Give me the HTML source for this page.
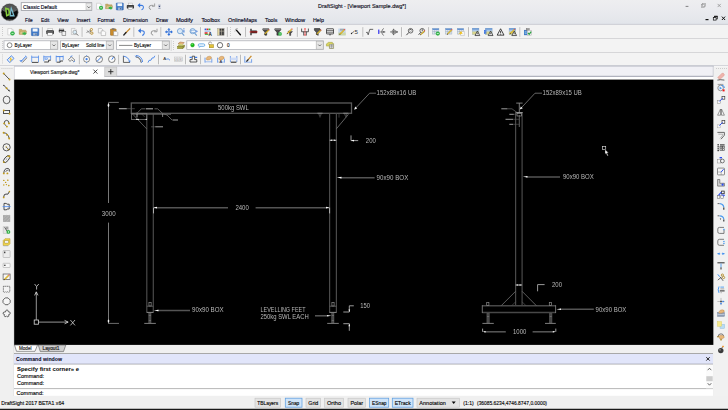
<!DOCTYPE html>
<html><head><meta charset="utf-8"><title>DraftSight - [Viewport Sample.dwg*]</title>
<style>
html,body{margin:0;padding:0;background:#f0f0f0;overflow:hidden;width:728px;height:410px}
svg{display:block;font-family:"Liberation Sans",sans-serif}
</style></head><body>
<svg width="728" height="410" viewBox="0 0 728 410">
<defs>
<linearGradient id="tg" x1="0" y1="0" x2="0" y2="1"><stop offset="0" stop-color="#eeeef0"/><stop offset="0.5" stop-color="#e9eaee"/><stop offset="1" stop-color="#e2e5ea"/></linearGradient>
<radialGradient id="lg" cx="0.5" cy="0.35" r="0.7"><stop offset="0" stop-color="#5a5a5a"/><stop offset="0.6" stop-color="#222"/><stop offset="1" stop-color="#000"/></radialGradient>
<linearGradient id="lg2" x1="0" y1="0" x2="0" y2="1"><stop offset="0" stop-color="#4a4a4a"/><stop offset="1" stop-color="#5e5e5e"/></linearGradient>
</defs>
<rect x="0" y="0" width="728" height="410" fill="#f0f0f0" />
<rect x="0" y="0" width="728" height="24" fill="url(#tg)" />
<line x1="0" y1="24.4" x2="728" y2="24.4" stroke="#c9cbd1" stroke-width="0.9" />
<rect x="0" y="25" width="728" height="41" fill="#f3f3f3" />
<line x1="0" y1="38.5" x2="728" y2="38.5" stroke="#d6d6d8" stroke-width="1" />
<line x1="0" y1="52.5" x2="728" y2="52.5" stroke="#d6d6d8" stroke-width="1" />
<line x1="0" y1="65.5" x2="728" y2="65.5" stroke="#d2d3d8" stroke-width="1.0" />
<line x1="0" y1="66.4" x2="728" y2="66.4" stroke="#fafafa" stroke-width="0.8" />
<rect x="14" y="66" width="699.6" height="10.4" fill="#f0f0f5" />
<line x1="14" y1="66.1" x2="713.6" y2="66.1" stroke="#bcbec8" stroke-width="1.0" />
<line x1="713.3" y1="66" x2="713.3" y2="77" stroke="#b4b6c2" stroke-width="0.8" />
<rect x="14.5" y="66.9" width="90" height="12.8" fill="#ffffff" />
<line x1="14.3" y1="66.5" x2="14.3" y2="79" stroke="#c4c5cc" stroke-width="0.6" />
<line x1="104.5" y1="76.4" x2="713" y2="76.4" stroke="#b0b2be" stroke-width="1.1" />
<rect x="104.5" y="77" width="609.1" height="2.7" fill="#ffffff" />
<rect x="104.8" y="67" width="12" height="9.3" fill="#dcdcdc" stroke="#bdbdbd" stroke-width="0.6" />
<line x1="108.2" y1="71.7" x2="113.4" y2="71.7" stroke="#222" stroke-width="0.9" />
<line x1="110.8" y1="69.1" x2="110.8" y2="74.3" stroke="#222" stroke-width="0.9" />
<line x1="93.4" y1="69.6" x2="97.4" y2="73.6" stroke="#222" stroke-width="0.8" />
<line x1="97.4" y1="69.6" x2="93.4" y2="73.6" stroke="#222" stroke-width="0.8" />
<text x="30.00" y="73.94" font-size="5.4" fill="#181818" textLength="49.50" lengthAdjust="spacingAndGlyphs" stroke="#181818" stroke-width="0.14" >Viewport Sample.dwg*</text>
<rect x="14" y="79.6" width="699.6" height="265.3" fill="#000" />
<rect x="0" y="66.6" width="13.6" height="330" fill="#f0f0f0" />
<line x1="13.8" y1="79" x2="13.8" y2="396" stroke="#d9d9d9" stroke-width="0.6" />
<rect x="713.6" y="66.6" width="14.4" height="330" fill="#f1f1f1" />
<rect x="14" y="345" width="699.3" height="8.5" fill="#f0f0f0" />
<path d="M14.5,345 L16.5,351.3 L35,351.3 L37.5,345 Z" stroke="#555" fill="#fff" stroke-width="0.6" />
<path d="M38.3,345 L40.3,351.6 L63.5,351.6 L65.8,345 Z" stroke="#555" fill="#cfcfcf" stroke-width="0.6" />
<text x="19.00" y="349.86" font-size="4.6" fill="#181818" textLength="12.50" lengthAdjust="spacingAndGlyphs" stroke="#181818" stroke-width="0.14" >Model</text>
<text x="42.50" y="349.86" font-size="4.6" fill="#181818" textLength="17.00" lengthAdjust="spacingAndGlyphs" stroke="#181818" stroke-width="0.14" >Layout1</text>
<line x1="14" y1="353.6" x2="713" y2="353.6" stroke="#8c8c8c" stroke-width="0.8" />
<rect x="14" y="354" width="699" height="10" fill="#e1e5fa" />
<line x1="14" y1="364.2" x2="713" y2="364.2" stroke="#8c8c90" stroke-width="0.8" />
<rect x="14" y="364.6" width="699" height="31.2" fill="#fff" />
<line x1="14" y1="388.6" x2="713" y2="388.6" stroke="#9a9a9a" stroke-width="0.7" />
<text x="16.00" y="361.34" font-size="5.4" fill="#05051a" textLength="46.00" lengthAdjust="spacingAndGlyphs" font-weight="bold" stroke="#05051a" stroke-width="0.04" >Command window</text>
<text x="17.00" y="370.72" font-size="5.9" fill="#080808" textLength="62.00" lengthAdjust="spacingAndGlyphs" font-weight="bold" stroke="#080808" stroke-width="0.04" >Specify first corner» e</text>
<text x="17.00" y="378.05" font-size="5.7" fill="#080808" textLength="27.00" lengthAdjust="spacingAndGlyphs" stroke="#080808" stroke-width="0.14" >Command:</text>
<text x="17.00" y="385.05" font-size="5.7" fill="#080808" textLength="27.00" lengthAdjust="spacingAndGlyphs" stroke="#080808" stroke-width="0.14" >Command:</text>
<text x="16.50" y="394.65" font-size="5.7" fill="#080808" textLength="27.00" lengthAdjust="spacingAndGlyphs" stroke="#080808" stroke-width="0.14" >Command:</text>
<line x1="706.3" y1="357.2" x2="709.7" y2="360.6" stroke="#222" stroke-width="1" />
<line x1="709.7" y1="357.2" x2="706.3" y2="360.6" stroke="#222" stroke-width="1" />
<rect x="706" y="365" width="7" height="23.3" fill="#fbfbfb" />
<path d="M707.7,370.2 L709.5,368.2 L711.3,370.2" stroke="#444" fill="none" stroke-width="0.8" />
<path d="M707.7,383.2 L709.5,385.2 L711.3,383.2" stroke="#444" fill="none" stroke-width="0.8" />
<rect x="706.3" y="376.2" width="6.4" height="5" fill="#cdcdcd" />
<rect x="0" y="396" width="728" height="13" fill="#f0f0f0" />
<line x1="0" y1="409.4" x2="728" y2="409.4" stroke="#1a1a1a" stroke-width="1.2" />
<text x="1.20" y="405.34" font-size="5.4" fill="#080808" textLength="63.00" lengthAdjust="spacingAndGlyphs" stroke="#080808" stroke-width="0.14" >DraftSight 2017 BETA1  x64</text>
<rect x="255" y="398.2" width="25.600000000000023" height="9" fill="#e3e3e3" stroke="#c4c4c4" stroke-width="0.6" />
<text x="257.20" y="405.24" font-size="5.4" fill="#080808" textLength="21.00" lengthAdjust="spacingAndGlyphs" stroke="#080808" stroke-width="0.14" >TBLayers</text>
<rect x="285.3" y="398.2" width="16.69999999999999" height="9" fill="#cfe4f9" stroke="#5e9fe0" stroke-width="0.75" />
<text x="288.00" y="405.24" font-size="5.4" fill="#080808" textLength="11.30" lengthAdjust="spacingAndGlyphs" stroke="#080808" stroke-width="0.14" >Snap</text>
<rect x="306" y="398.2" width="14.600000000000023" height="9" fill="#e3e3e3" stroke="#c4c4c4" stroke-width="0.6" />
<text x="308.30" y="405.24" font-size="5.4" fill="#080808" textLength="10.00" lengthAdjust="spacingAndGlyphs" stroke="#080808" stroke-width="0.14" >Grid</text>
<rect x="324.6" y="398.2" width="18.899999999999977" height="9" fill="#e3e3e3" stroke="#c4c4c4" stroke-width="0.6" />
<text x="327.00" y="405.24" font-size="5.4" fill="#080808" textLength="14.00" lengthAdjust="spacingAndGlyphs" stroke="#080808" stroke-width="0.14" >Ortho</text>
<rect x="348" y="398.2" width="17.399999999999977" height="9" fill="#e3e3e3" stroke="#c4c4c4" stroke-width="0.6" />
<text x="350.50" y="405.24" font-size="5.4" fill="#080808" textLength="12.50" lengthAdjust="spacingAndGlyphs" stroke="#080808" stroke-width="0.14" >Polar</text>
<rect x="369.6" y="398.2" width="19.099999999999966" height="9" fill="#cfe4f9" stroke="#5e9fe0" stroke-width="0.75" />
<text x="372.00" y="405.24" font-size="5.4" fill="#080808" textLength="14.50" lengthAdjust="spacingAndGlyphs" stroke="#080808" stroke-width="0.14" >ESnap</text>
<rect x="392.3" y="398.2" width="20.69999999999999" height="9" fill="#cfe4f9" stroke="#5e9fe0" stroke-width="0.75" />
<text x="394.70" y="405.24" font-size="5.4" fill="#080808" textLength="16.00" lengthAdjust="spacingAndGlyphs" stroke="#080808" stroke-width="0.14" >ETrack</text>
<rect x="417" y="398.2" width="42.39999999999998" height="9" fill="#e3e3e3" stroke="#c4c4c4" stroke-width="0.6" />
<text x="419.30" y="405.24" font-size="5.4" fill="#080808" textLength="26.50" lengthAdjust="spacingAndGlyphs" stroke="#080808" stroke-width="0.14" >Annotation</text>
<path d="M451.7,401.6 L455.7,401.6 L453.7,404 Z" stroke="none" fill="#080808" stroke-width="1" />
<text x="463.20" y="405.24" font-size="5.4" fill="#080808" textLength="10.50" lengthAdjust="spacingAndGlyphs" stroke="#080808" stroke-width="0.14" >(1:1)</text>
<text x="477.00" y="405.24" font-size="5.4" fill="#080808" textLength="70.00" lengthAdjust="spacingAndGlyphs" stroke="#080808" stroke-width="0.14" >(36085.6234,4746.8747,0.0000)</text>
<circle cx="9.65" cy="12.25" r="8.6" fill="#0c0c0c" stroke="#9a9a9a" stroke-width="0.6"/>
<clipPath id="lc"><circle cx="9.65" cy="12.25" r="8.3"/></clipPath>
<g clip-path="url(#lc)"><ellipse cx="9.65" cy="6" rx="9.5" ry="6.6" fill="url(#lg2)"/><ellipse cx="9.65" cy="22.5" rx="7" ry="3.6" fill="#6a6a6a" opacity="0.55"/></g>
<path d="M4.9,7.3 L9.1,8.5 Q10.6,11.8 9.75,15.2 L6.1,16.8 Z" stroke="none" fill="#86cc3c" stroke-width="1" />
<path d="M6.6,9.4 L8,9.9 Q8.9,12 8.3,14 L7.3,14.5 Z" stroke="none" fill="#1c1c1c" stroke-width="1" />
<path d="M11,6.1 L14.9,16.5 L9.5,16.6 Z" stroke="none" fill="#7cc0d2" stroke-width="1" />
<path d="M11.4,10.6 L13,14.9 L10.8,15 Z" stroke="none" fill="#1c2428" stroke-width="1" />
<rect x="21.2" y="2.7" width="70.6" height="7.8" fill="#fff" stroke="#8e9098" stroke-width="0.7" />
<rect x="86" y="3.2" width="5.4" height="6.8" fill="#e9e9e9" stroke="#b5b5b5" stroke-width="0.5" />
<path d="M87.4,6.4 L88.8,7.9 L90.2,6.4" stroke="#444" fill="none" stroke-width="0.7" />
<text x="23.00" y="9.14" font-size="5.4" fill="#05051a" textLength="34.00" lengthAdjust="spacingAndGlyphs" stroke="#05051a" stroke-width="0.14" >Classic Default</text>
<text x="318.00" y="8.32" font-size="5.6" fill="#10101c" textLength="88.00" lengthAdjust="spacingAndGlyphs" stroke="#10101c" stroke-width="0.14" >DraftSight - [Viewport Sample.dwg*]</text>
<line x1="685.6" y1="6.4" x2="688.4" y2="6.4" stroke="#666" stroke-width="0.8" />
<rect x="701.3" y="4.4" width="3" height="3" fill="none" stroke="#999" stroke-width="0.6" />
<rect x="702.3" y="3.4" width="3" height="3" fill="none" stroke="#999" stroke-width="0.6" />
<line x1="717.6" y1="3.9" x2="720.8" y2="7.1" stroke="#888" stroke-width="0.7" />
<line x1="720.8" y1="3.9" x2="717.6" y2="7.1" stroke="#888" stroke-width="0.7" />
<line x1="705.5" y1="19.6" x2="708.5" y2="19.6" stroke="#111" stroke-width="1.2" />
<rect x="714.5" y="16.3" width="2.8" height="2.6" fill="none" stroke="#111" stroke-width="0.7" />
<rect x="713.3" y="17.5" width="2.8" height="2.6" fill="#e6e8ec" stroke="#111" stroke-width="0.7" />
<line x1="714.3" y1="16.3" x2="717.5" y2="16.3" stroke="#111" stroke-width="1.0" />
<line x1="721.9" y1="16.6" x2="725.1" y2="20" stroke="#111" stroke-width="1.0" />
<line x1="725.1" y1="16.6" x2="721.9" y2="20" stroke="#111" stroke-width="1.0" />
<text x="25.00" y="22.05" font-size="5.7" fill="#05051a" textLength="7.70" lengthAdjust="spacingAndGlyphs" stroke="#05051a" stroke-width="0.14" >File</text>
<text x="41.00" y="22.05" font-size="5.7" fill="#05051a" textLength="8.40" lengthAdjust="spacingAndGlyphs" stroke="#05051a" stroke-width="0.14" >Edit</text>
<text x="57.20" y="22.05" font-size="5.7" fill="#05051a" textLength="11.30" lengthAdjust="spacingAndGlyphs" stroke="#05051a" stroke-width="0.14" >View</text>
<text x="76.50" y="22.05" font-size="5.7" fill="#05051a" textLength="13.70" lengthAdjust="spacingAndGlyphs" stroke="#05051a" stroke-width="0.14" >Insert</text>
<text x="97.50" y="22.05" font-size="5.7" fill="#05051a" textLength="17.00" lengthAdjust="spacingAndGlyphs" stroke="#05051a" stroke-width="0.14" >Format</text>
<text x="122.90" y="22.05" font-size="5.7" fill="#05051a" textLength="25.00" lengthAdjust="spacingAndGlyphs" stroke="#05051a" stroke-width="0.14" >Dimension</text>
<text x="156.00" y="22.05" font-size="5.7" fill="#05051a" textLength="12.00" lengthAdjust="spacingAndGlyphs" stroke="#05051a" stroke-width="0.14" >Draw</text>
<text x="176.00" y="22.05" font-size="5.7" fill="#05051a" textLength="17.00" lengthAdjust="spacingAndGlyphs" stroke="#05051a" stroke-width="0.14" >Modify</text>
<text x="201.40" y="22.05" font-size="5.7" fill="#05051a" textLength="18.70" lengthAdjust="spacingAndGlyphs" stroke="#05051a" stroke-width="0.14" >Toolbox</text>
<text x="228.00" y="22.05" font-size="5.7" fill="#05051a" textLength="29.00" lengthAdjust="spacingAndGlyphs" stroke="#05051a" stroke-width="0.14" >OnlineMaps</text>
<text x="265.00" y="22.05" font-size="5.7" fill="#05051a" textLength="12.40" lengthAdjust="spacingAndGlyphs" stroke="#05051a" stroke-width="0.14" >Tools</text>
<text x="285.00" y="22.05" font-size="5.7" fill="#05051a" textLength="20.00" lengthAdjust="spacingAndGlyphs" stroke="#05051a" stroke-width="0.14" >Window</text>
<text x="313.00" y="22.05" font-size="5.7" fill="#05051a" textLength="11.00" lengthAdjust="spacingAndGlyphs" stroke="#05051a" stroke-width="0.14" >Help</text>
<g transform="translate(96,2.7) scale(0.95)"><path d="M0.6,0.6 L4.6,0.6 L6.2,2.2 L6.2,7 L0.6,7 Z" stroke="#b9b9b9" fill="#fdfdfd" stroke-width="0.5" /><path d="M4.6,0.6 L4.6,2.2 L6.2,2.2" stroke="#bbb" fill="none" stroke-width="0.4" /><circle cx="5.3" cy="5.4" r="2.2" fill="#35b34a"/><rect x="4.3" y="5.0" width="2" height="0.8" fill="#d9f5dc"/></g>
<g transform="translate(105.3,2.7) scale(0.95)"><path d="M0.3,1.4 L2.8,1.4 L3.5,2.2 L7,2.2 L7,6.2 L0.3,6.2 Z" stroke="#a99252" fill="#c9ae6c" stroke-width="0.4" /><path d="M0.3,6.2 L1.6,3.4 L7.8,3.4 L7,6.2 Z" stroke="#a99252" fill="#dcc78c" stroke-width="0.4" /><path d="M3.6,4.6 L5.6,4.6 L5.6,3.6 L7.6,5.6 L5.6,7.6 L5.6,6.6 L3.6,6.6 Z" stroke="none" fill="#35b34a" stroke-width="0.8" /></g>
<g transform="translate(116,2.7) scale(0.95)"><rect x="0.3" y="0.3" width="7.4" height="7.4" fill="#3c78c8" stroke="#2a5ca8" stroke-width="0.5" rx="0.6"/><rect x="1.5" y="0.6" width="5" height="3" fill="#f4f7fb"/><rect x="2" y="5" width="4" height="2.6" fill="#9eb4cf"/><rect x="4.4" y="5.5" width="1" height="1.6" fill="#3c5f96"/></g>
<g transform="translate(126.6,2.7) scale(0.95)"><rect x="1.8" y="0.4" width="4.4" height="2.2" fill="#fafafa" stroke="#999" stroke-width="0.4"/><rect x="0.2" y="2.4" width="7.6" height="3.8" fill="#333" rx="0.9"/><rect x="1.6" y="4.8" width="4.8" height="2.6" fill="#fafafa" stroke="#777" stroke-width="0.4"/><rect x="1" y="3.3" width="6" height="0.7" fill="#777"/></g>
<g transform="translate(137.3,2.7) scale(0.95)"><path d="M1.4,2.8 L4.2,2.8 Q6.8,2.8 6.4,5.4 Q6,7.2 4.4,7.4" stroke="#3a7ae0" fill="none" stroke-width="1.1" /><path d="M0.2,2.8 L3,0.4 L3,5.2 Z" stroke="none" fill="#2f6fd8" stroke-width="0.8" /></g>
<g transform="translate(147.6,2.7) scale(0.95)"><path d="M6.2,2.8 L4,2.8 Q1.4,2.8 1.6,5.2 Q2,7 3.6,7.2" stroke="#8a8a8a" fill="none" stroke-width="0.9" /><path d="M7.4,0.8 L7.4,3.8 L4.6,3.8" stroke="#8a8a8a" fill="none" stroke-width="0.8" /></g>
<g transform="translate(158,4.2) scale(0.8)"><path d="M0.4,2.2 L3.2,2.2 L1.8,3.8 Z" stroke="none" fill="#2a3a6a" stroke-width="0.8" /><rect x="0.4" y="4.6" width="2.8" height="0.6" fill="#2a3a6a"/><rect x="0.4" y="0.8" width="2.8" height="0.6" fill="#2a3a6a"/></g>
<rect x="2" y="27" width="0.7" height="0.7" fill="#a4a4a4" />
<rect x="2" y="29.0" width="0.7" height="0.7" fill="#a4a4a4" />
<rect x="2" y="31.0" width="0.7" height="0.7" fill="#a4a4a4" />
<rect x="2" y="33.0" width="0.7" height="0.7" fill="#a4a4a4" />
<rect x="2" y="35.0" width="0.7" height="0.7" fill="#a4a4a4" />
<g transform="translate(7.2,27.95)"><path d="M0.6,0.6 L4.6,0.6 L6.2,2.2 L6.2,7 L0.6,7 Z" stroke="#b9b9b9" fill="#fdfdfd" stroke-width="0.5" /><path d="M4.6,0.6 L4.6,2.2 L6.2,2.2" stroke="#bbb" fill="none" stroke-width="0.4" /><circle cx="5.3" cy="5.4" r="2.2" fill="#35b34a"/><rect x="4.3" y="5.0" width="2" height="0.8" fill="#d9f5dc"/></g>
<g transform="translate(18.9,27.95)"><path d="M0.3,1.4 L2.8,1.4 L3.5,2.2 L7,2.2 L7,6.2 L0.3,6.2 Z" stroke="#a99252" fill="#c9ae6c" stroke-width="0.4" /><path d="M0.3,6.2 L1.6,3.4 L7.8,3.4 L7,6.2 Z" stroke="#a99252" fill="#dcc78c" stroke-width="0.4" /><path d="M3.6,4.6 L5.6,4.6 L5.6,3.6 L7.6,5.6 L5.6,7.6 L5.6,6.6 L3.6,6.6 Z" stroke="none" fill="#35b34a" stroke-width="0.8" /></g>
<g transform="translate(31.1,27.95)"><rect x="0.3" y="0.3" width="7.4" height="7.4" fill="#3c78c8" stroke="#2a5ca8" stroke-width="0.5" rx="0.6"/><rect x="1.5" y="0.6" width="5" height="3" fill="#f4f7fb"/><rect x="2" y="5" width="4" height="2.6" fill="#9eb4cf"/><rect x="4.4" y="5.5" width="1" height="1.6" fill="#3c5f96"/></g>
<line x1="42.4" y1="27.2" x2="42.4" y2="36.8" stroke="#9a9a9a" stroke-width="0.8" />
<line x1="43.1" y1="27.2" x2="43.1" y2="36.8" stroke="#fbfbfb" stroke-width="0.6" />
<g transform="translate(46.1,27.95)"><rect x="1.8" y="0.4" width="4.4" height="2.2" fill="#fafafa" stroke="#999" stroke-width="0.4"/><rect x="0.2" y="2.4" width="7.6" height="3.8" fill="#333" rx="0.9"/><rect x="1.6" y="4.8" width="4.8" height="2.6" fill="#fafafa" stroke="#777" stroke-width="0.4"/><rect x="1" y="3.3" width="6" height="0.7" fill="#777"/></g>
<g transform="translate(58.4,27.95)"><rect x="0.4" y="1.2" width="5.4" height="3.4" fill="#333" rx="0.8"/><rect x="1.4" y="0.2" width="3.4" height="1.4" fill="#f4f4f4" stroke="#888" stroke-width="0.3"/><rect x="3.6" y="3.4" width="3.8" height="4.2" fill="#f2f2f2" stroke="#555" stroke-width="0.5"/><rect x="1.2" y="3.3" width="2" height="1.2" fill="#eee"/></g>
<g transform="translate(70.6,27.95)"><path d="M0.8,0.5 L4.4,0.5 L5.6,1.7 L5.6,6.6 L0.8,6.6 Z" stroke="#aaa" fill="#f4f4f4" stroke-width="0.5" /><circle cx="4.2" cy="4.2" r="1.9" fill="#d9ecf7" stroke="#888" stroke-width="0.6"/><path d="M5.6,5.6 L7.6,7.6" stroke="#666" fill="none" stroke-width="1.0" /></g>
<line x1="82.2" y1="27.2" x2="82.2" y2="36.8" stroke="#9a9a9a" stroke-width="0.8" />
<line x1="82.9" y1="27.2" x2="82.9" y2="36.8" stroke="#fbfbfb" stroke-width="0.6" />
<g transform="translate(86,27.95)"><path d="M0.4,4.6 L5,2.2 M0.8,2.4 L4.2,5.6" stroke="#777" fill="none" stroke-width="0.7" /><circle cx="5.4" cy="1.6" r="1.1" fill="none" stroke="#b58a2a" stroke-width="0.9"/><circle cx="5.8" cy="5.2" r="1.2" fill="none" stroke="#b58a2a" stroke-width="0.9"/><circle cx="4.4" cy="3.6" r="0.5" fill="#555"/></g>
<g transform="translate(98,27.95)"><path d="M0.4,0.5 L3.4,0.5 L4.6,1.7 L4.6,5 L0.4,5 Z" stroke="#999" fill="#f7f7f7" stroke-width="0.5" /><path d="M3.2,2.9 L6.2,2.9 L7.6,4.3 L7.6,7.6 L3.2,7.6 Z" stroke="#999" fill="#fbfbfb" stroke-width="0.5" /></g>
<g transform="translate(110.2,27.95)"><rect x="0.3" y="1" width="5.6" height="6.4" fill="#c98a2a" stroke="#8c5e14" stroke-width="0.5" rx="0.5"/><rect x="1.8" y="0.2" width="2.6" height="1.6" fill="#777" rx="0.4"/><path d="M3.4,3.4 L6.4,3.4 L7.6,4.6 L7.6,7.7 L3.4,7.7 Z" stroke="#888" fill="#fafafa" stroke-width="0.5" /></g>
<g transform="translate(122.6,27.95)"><path d="M7.2,0.8 L3.2,5" stroke="#c88a2a" fill="none" stroke-width="1.2" stroke-linecap="round"/><path d="M3.4,4.6 L1.2,7" stroke="#222" fill="none" stroke-width="1.3" stroke-linecap="round"/></g>
<line x1="134.0" y1="27.2" x2="134.0" y2="36.8" stroke="#9a9a9a" stroke-width="0.8" />
<line x1="134.7" y1="27.2" x2="134.7" y2="36.8" stroke="#fbfbfb" stroke-width="0.6" />
<g transform="translate(137.8,27.95)"><path d="M1.4,2.8 L4.2,2.8 Q6.8,2.8 6.4,5.4 Q6,7.2 4.4,7.4" stroke="#3a7ae0" fill="none" stroke-width="1.1" /><path d="M0.2,2.8 L3,0.4 L3,5.2 Z" stroke="none" fill="#2f6fd8" stroke-width="0.8" /></g>
<g transform="translate(149.6,27.95)"><path d="M6.2,2.8 L4,2.8 Q1.4,2.8 1.6,5.2 Q2,7 3.6,7.2" stroke="#8a8a8a" fill="none" stroke-width="0.9" /><path d="M7.4,0.8 L7.4,3.8 L4.6,3.8" stroke="#8a8a8a" fill="none" stroke-width="0.8" /></g>
<line x1="161.0" y1="27.2" x2="161.0" y2="36.8" stroke="#9a9a9a" stroke-width="0.8" />
<line x1="161.7" y1="27.2" x2="161.7" y2="36.8" stroke="#fbfbfb" stroke-width="0.6" />
<g transform="translate(164.9,27.95)"><path d="M4,0 L5.6,1.9 L2.4,1.9 Z M4,8 L5.6,6.1 L2.4,6.1 Z M0,4 L1.9,2.4 L1.9,5.6 Z M8,4 L6.1,2.4 L6.1,5.6 Z" stroke="none" fill="#2f6fd8" stroke-width="0.8" /><path d="M4,1.5 L4,6.5 M1.5,4 L6.5,4" stroke="#2f6fd8" fill="none" stroke-width="1.2" /><circle cx="4" cy="4" r="0.7" fill="#dfe9fb"/></g>
<g transform="translate(177,27.95)"><circle cx="3" cy="3.2" r="2.6" fill="#dbe9f7" stroke="#6a9bd0" stroke-width="0.8"/><path d="M5,5.2 L7.2,7.6" stroke="#6a9bd0" fill="none" stroke-width="1.1" /><rect x="6.4" y="0.4" width="1" height="1" fill="#2f6fd8"/><rect x="6.4" y="2.2" width="1" height="2.4" fill="#2f6fd8"/></g>
<g transform="translate(189.6,27.95)"><circle cx="3" cy="3.2" r="2.6" fill="#dbe9f7" stroke="#6a9bd0" stroke-width="0.8"/><path d="M5,5.2 L7.2,7.6" stroke="#6a9bd0" fill="none" stroke-width="1.1" /><rect x="1.4" y="2.2" width="4.6" height="2.2" fill="#eef4fb" stroke="#5a8fd0" stroke-width="0.5"/><path d="M6,2.6 L7.8,3.4 L6,4.4" stroke="#2f6fd8" fill="none" stroke-width="0.7" /></g>
<line x1="200.5" y1="27.2" x2="200.5" y2="36.8" stroke="#9a9a9a" stroke-width="0.8" />
<line x1="201.2" y1="27.2" x2="201.2" y2="36.8" stroke="#fbfbfb" stroke-width="0.6" />
<g transform="translate(204.4,27.95)"><rect x="0.2" y="0.6" width="1.8" height="1.6" fill="#2f5fe0"/><rect x="2.2" y="0.6" width="1.8" height="1.6" fill="#e02828"/><rect x="4.2" y="0.6" width="1.8" height="1.6" fill="#2fb040"/><rect x="0.2" y="2.6" width="5.8" height="1.3" fill="#a9c2ef"/><rect x="0.2" y="4.3" width="3" height="1.6" fill="#e02828"/><rect x="0.4" y="5.9" width="3.6" height="1" fill="#2fb040"/><text x="4.2" y="8" font-size="4.6" fill="#111" font-weight="bold">A</text></g>
<g transform="translate(216.8,27.95)"><rect x="0.4" y="0.4" width="7" height="7.2" fill="#c9c2b0" stroke="#999" stroke-width="0.4"/><rect x="0.8" y="0.8" width="1.4" height="6.4" fill="#e4d6a0"/><rect x="2.8" y="0.8" width="1.9" height="2" fill="#333"/><rect x="5.2" y="0.8" width="1.9" height="2" fill="#333"/><rect x="2.8" y="3.4" width="1.9" height="3.8" fill="#444"/><rect x="5.2" y="3.4" width="1.9" height="3.8" fill="#444"/></g>
<line x1="227.4" y1="27.2" x2="227.4" y2="36.8" stroke="#9a9a9a" stroke-width="0.8" />
<line x1="228.1" y1="27.2" x2="228.1" y2="36.8" stroke="#fbfbfb" stroke-width="0.6" />
<g transform="translate(234,27.95)"><path d="M2.6,2.4 L6.4,6.8" stroke="#111" fill="none" stroke-width="1.4" stroke-linecap="round"/><path d="M1,1.8 L2.6,0.6 M3.4,0.4 L3.2,1.4 M0.6,3.2 L1.6,2.8" stroke="#555" fill="none" stroke-width="0.5" /></g>
<line x1="245.7" y1="27.2" x2="245.7" y2="36.8" stroke="#9a9a9a" stroke-width="0.8" />
<line x1="246.39999999999998" y1="27.2" x2="246.39999999999998" y2="36.8" stroke="#fbfbfb" stroke-width="0.6" />
<g transform="translate(249.6,27.95)"><path d="M1.4,0.8 L1.4,7.2" stroke="#222" fill="none" stroke-width="1.3" /><rect x="1.6" y="2.6" width="5.8" height="2.8" fill="#222" rx="0.6"/><path d="M0,4 L8,4" stroke="#e02020" fill="none" stroke-width="0.9" /></g>
<g transform="translate(262,27.95)"><path d="M0.8,0.8 L6.8,0.8 L6.8,2 L4.7,4.2 L4.7,7.2 L2.9,7.2 L2.9,4.2 L0.8,2 Z" stroke="#1a1a1a" fill="#4a4a4a" stroke-width="0.5" /><rect x="1" y="0.9" width="5.6" height="0.8" fill="#9a9a9a"/><g transform="translate(1.4,0.6) scale(0.86)"><path d="M1.2,6.8 L1.9,5.2 L5.7,1.4 L6.6,2.3 L2.8,6.1 Z" stroke="#a8861c" fill="#e8c22e" stroke-width="0.3" /><path d="M0.9,7.1 L1.5,5.7 L2.3,6.5 Z" stroke="none" fill="#2a2a2a" stroke-width="0.8" /><path d="M5.7,1.4 L6.4,0.7 L7.3,1.6 L6.6,2.3 Z" stroke="none" fill="#e8484a" stroke-width="0.8" /></g></g>
<g transform="translate(274,27.95)"><path d="M0.8,0.8 L6.8,0.8 L6.8,2 L4.7,4.2 L4.7,7.2 L2.9,7.2 L2.9,4.2 L0.8,2 Z" stroke="#1a1a1a" fill="#4a4a4a" stroke-width="0.5" /><rect x="1" y="0.9" width="5.6" height="0.8" fill="#9a9a9a"/><circle cx="6" cy="6" r="1.9" fill="#35b34a"/><rect x="5.2" y="5.7" width="1.6" height="0.6" fill="#d9f5dc"/></g>
<g transform="translate(286.2,27.95)"><g transform="translate(1.4,2.6) scale(0.68)"><path d="M0.8,0.8 L6.8,0.8 L6.8,2 L4.7,4.2 L4.7,7.2 L2.9,7.2 L2.9,4.2 L0.8,2 Z" stroke="#1a1a1a" fill="#4a4a4a" stroke-width="0.5" /><rect x="1" y="0.9" width="5.6" height="0.8" fill="#9a9a9a"/></g><g transform="translate(-0.4,-0.4) scale(0.95)"><path d="M1.2,6.8 L1.9,5.2 L5.7,1.4 L6.6,2.3 L2.8,6.1 Z" stroke="#a8861c" fill="#e8c22e" stroke-width="0.3" /><path d="M0.9,7.1 L1.5,5.7 L2.3,6.5 Z" stroke="none" fill="#2a2a2a" stroke-width="0.8" /><path d="M5.7,1.4 L6.4,0.7 L7.3,1.6 L6.6,2.3 Z" stroke="none" fill="#e8484a" stroke-width="0.8" /></g></g>
<line x1="297.4" y1="27.2" x2="297.4" y2="36.8" stroke="#9a9a9a" stroke-width="0.8" />
<line x1="298.09999999999997" y1="27.2" x2="298.09999999999997" y2="36.8" stroke="#fbfbfb" stroke-width="0.6" />
<g transform="translate(301,27.95)"><path d="M0.6,0.6 L0.6,3.8 L7.4,3.8 L7.4,0.6 M2.7,3.8 L2.7,7.6 M5.3,3.8 L5.3,7.6" stroke="#1a1a1a" fill="none" stroke-width="0.7" /><path d="M4,0.2 L4,7.8" stroke="#f03030" fill="none" stroke-width="0.6" /><path d="M3.4,1.6 L4,0.4 L4.6,1.6 M3.4,6.4 L4,7.6 L4.6,6.4" stroke="#f03030" fill="none" stroke-width="0.5" /></g>
<g transform="translate(313.8,27.95)"><path d="M0.6,0.6 L6,0.6 L7,2.4 L4.4,5.4 L4.4,7.4 L2.6,6.4 L2.6,4.4 L0.6,2.2 Z" stroke="#111" fill="#555" stroke-width="0.5" /><g transform="translate(1.6,0.8) scale(0.84)"><path d="M1.2,6.8 L1.9,5.2 L5.7,1.4 L6.6,2.3 L2.8,6.1 Z" stroke="#a8861c" fill="#e8c22e" stroke-width="0.3" /><path d="M0.9,7.1 L1.5,5.7 L2.3,6.5 Z" stroke="none" fill="#2a2a2a" stroke-width="0.8" /><path d="M5.7,1.4 L6.4,0.7 L7.3,1.6 L6.6,2.3 Z" stroke="none" fill="#e8484a" stroke-width="0.8" /></g></g>
<g transform="translate(326,27.95)"><rect x="0.5" y="0.8" width="7" height="5.2" fill="#ededed" stroke="#2a2a2a" stroke-width="0.75" rx="0.4"/><path d="M0.5,2.6 L7.5,2.6 M0.5,4.3 L7.5,4.3" stroke="#2a2a2a" fill="none" stroke-width="0.6" /><path d="M3,6 L4,7.4 L5,6" stroke="#2a2a2a" fill="none" stroke-width="0.6" /></g>
<g transform="translate(338,27.95)"><rect x="0.3" y="0.6" width="7.4" height="6.8" fill="#c4d6ea"/><rect x="0.3" y="4.6" width="7.4" height="2.8" fill="#ccd8a6"/><path d="M3,0.6 L3,2.4 M5,0.6 L5,2.4 M2,2 L6,2" stroke="#777" fill="none" stroke-width="0.5" /><g transform="translate(0.4,0.2) scale(0.95)"><path d="M1.2,6.8 L1.9,5.2 L5.7,1.4 L6.6,2.3 L2.8,6.1 Z" stroke="#a8861c" fill="#e8c22e" stroke-width="0.3" /><path d="M0.9,7.1 L1.5,5.7 L2.3,6.5 Z" stroke="none" fill="#2a2a2a" stroke-width="0.8" /><path d="M5.7,1.4 L6.4,0.7 L7.3,1.6 L6.6,2.3 Z" stroke="none" fill="#e8484a" stroke-width="0.8" /></g></g>
<g transform="translate(350.6,27.95)"><path d="M0.6,5.6 L2,4.6 L3.6,3.4" stroke="#222" fill="none" stroke-width="0.6" /><circle cx="0.9" cy="5.5" r="0.7" fill="#222"/><text x="3.8" y="6.4" font-size="6.2" fill="#333">5</text></g>
<line x1="363.0" y1="27.2" x2="363.0" y2="36.8" stroke="#9a9a9a" stroke-width="0.8" />
<line x1="363.7" y1="27.2" x2="363.7" y2="36.8" stroke="#fbfbfb" stroke-width="0.6" />
<g transform="translate(365.8,27.95)"><path d="M0.4,4.6 L1.4,4.2 L2.4,6.8 L4,1.4 L7.4,1.4" stroke="#1a1a1a" fill="none" stroke-width="0.65" /></g>
<g transform="translate(378,27.95)"><rect x="0.3" y="1.6" width="1.0" height="4.4" fill="#1010f0"/><path d="M1.6,4 L7.4,4" stroke="#333" fill="none" stroke-width="0.5" /><path d="M5.6,0.4 Q2,4 5.6,7.6" stroke="#222" fill="none" stroke-width="0.6" /><path d="M5,3.4 L6.6,4 L5,4.6" stroke="#222" fill="none" stroke-width="0.5" /></g>
<g transform="translate(390,27.95)"><path d="M0,4 L8,4 M3.6,0.8 L3.6,7.2" stroke="#222" fill="none" stroke-width="0.55" /><ellipse cx="3.6" cy="4" rx="1.5" ry="2.4" fill="none" stroke="#333" stroke-width="0.5" /><path d="M5,2.6 L7.6,4 L5,5.4" stroke="#333" fill="none" stroke-width="0.5" /></g>
<line x1="401.5" y1="27.2" x2="401.5" y2="36.8" stroke="#9a9a9a" stroke-width="0.8" />
<line x1="402.2" y1="27.2" x2="402.2" y2="36.8" stroke="#fbfbfb" stroke-width="0.6" />
<g transform="translate(405.6,27.95)"><circle cx="5" cy="2.8" r="2.3" fill="#f4f4f4" stroke="#333" stroke-width="0.7"/><path d="M3.3,4.5 L0.8,7.2" stroke="#333" fill="none" stroke-width="0.9" /><rect x="4.2" y="1.8" width="1.6" height="2" fill="none" stroke="#666" stroke-width="0.4"/></g>
<g transform="translate(417.8,27.95)"><circle cx="4.4" cy="2.8" r="2.3" fill="#f4f4f4" stroke="#333" stroke-width="0.7"/><path d="M2.8,4.6 L0.8,6.8" stroke="#333" fill="none" stroke-width="0.9" /><rect x="4" y="1.2" width="0.8" height="2.2" fill="#333"/><g transform="translate(1.6,1.6) scale(0.8)"><path d="M1.2,6.8 L1.9,5.2 L5.7,1.4 L6.6,2.3 L2.8,6.1 Z" stroke="#a8861c" fill="#e8c22e" stroke-width="0.3" /><path d="M0.9,7.1 L1.5,5.7 L2.3,6.5 Z" stroke="none" fill="#2a2a2a" stroke-width="0.8" /><path d="M5.7,1.4 L6.4,0.7 L7.3,1.6 L6.6,2.3 Z" stroke="none" fill="#e8484a" stroke-width="0.8" /></g></g>
<line x1="428.7" y1="27.2" x2="428.7" y2="36.8" stroke="#9a9a9a" stroke-width="0.8" />
<line x1="429.4" y1="27.2" x2="429.4" y2="36.8" stroke="#fbfbfb" stroke-width="0.6" />
<g transform="translate(432.2,27.95)"><rect x="0.3" y="0.5" width="6.4" height="5.6" fill="#dfe6ee" stroke="#8aa0b8" stroke-width="0.4"/><rect x="0.3" y="0.5" width="6.4" height="1.5" fill="#5f8fd0"/><path d="M0.3,3.6 L6.7,3.6 M2.5,2 L2.5,6.1 M4.6,2 L4.6,6.1" stroke="#8aa0b8" fill="none" stroke-width="0.4" /><circle cx="5.6" cy="5.6" r="2.1" fill="#35b34a"/><rect x="4.6" y="5.2" width="2" height="0.8" fill="#d9f5dc"/></g>
<g transform="translate(445.2,27.95)"><rect x="0.3" y="0.5" width="6.4" height="5.6" fill="#dfe6ee" stroke="#8aa0b8" stroke-width="0.4"/><rect x="0.3" y="0.5" width="6.4" height="1.5" fill="#5f8fd0"/><path d="M0.3,3.6 L6.7,3.6 M2.5,2 L2.5,6.1 M4.6,2 L4.6,6.1" stroke="#8aa0b8" fill="none" stroke-width="0.4" /><g transform="translate(0.8,0.4) scale(0.9)"><path d="M1.2,6.8 L1.9,5.2 L5.7,1.4 L6.6,2.3 L2.8,6.1 Z" stroke="#a8861c" fill="#e8c22e" stroke-width="0.3" /><path d="M0.9,7.1 L1.5,5.7 L2.3,6.5 Z" stroke="none" fill="#2a2a2a" stroke-width="0.8" /><path d="M5.7,1.4 L6.4,0.7 L7.3,1.6 L6.6,2.3 Z" stroke="none" fill="#e8484a" stroke-width="0.8" /></g></g>
<g transform="translate(457,27.95)"><rect x="0.3" y="0.5" width="6.4" height="5.6" fill="#dfe6ee" stroke="#8aa0b8" stroke-width="0.4"/><rect x="0.3" y="0.5" width="6.4" height="1.5" fill="#5f8fd0"/><path d="M0.3,3.6 L6.7,3.6 M2.5,2 L2.5,6.1 M4.6,2 L4.6,6.1" stroke="#8aa0b8" fill="none" stroke-width="0.4" /><path d="M3.6,3.4 L7.4,3.4 L7.4,7.6 L3.6,7.6 Z" stroke="#aaa" fill="#f7f7f7" stroke-width="0.4" /><path d="M1,6.6 L3,4.6 L2.6,3.2 L4,4 L5.4,3.4 L4.8,4.8 L5.8,6 L4.2,5.8 L3.4,7 L3.2,5.6 Z" stroke="none" fill="#f0c020" stroke-width="0.8" /></g>
<line x1="468.5" y1="27.2" x2="468.5" y2="36.8" stroke="#9a9a9a" stroke-width="0.8" />
<line x1="469.2" y1="27.2" x2="469.2" y2="36.8" stroke="#fbfbfb" stroke-width="0.6" />
<g transform="translate(472,27.95)"><rect x="0.3" y="0.4" width="6.6" height="6.2" fill="#a9c8ea" stroke="#7d9cc0" stroke-width="0.4"/><rect x="0.3" y="3.6" width="6.6" height="3" fill="#d9d48c"/><rect x="0.3" y="0.4" width="6.6" height="1.2" fill="#5f8fd0"/><path d="M3,7.6 L5.4,3 L7.8,7.6 Z" stroke="#222" fill="#e6e6e6" stroke-width="0.7" /><path d="M5.4,4.6 L5.4,6.2" stroke="#222" fill="none" stroke-width="0.6" /></g>
<g transform="translate(484,27.95)"><g transform="translate(1.2,0)"><rect x="0.3" y="0.4" width="6.6" height="6.2" fill="#a9c8ea" stroke="#7d9cc0" stroke-width="0.4"/><rect x="0.3" y="3.6" width="6.6" height="3" fill="#d9d48c"/><rect x="0.3" y="0.4" width="6.6" height="1.2" fill="#5f8fd0"/><path d="M3,7.6 L5.4,3 L7.8,7.6 Z" stroke="#222" fill="#e6e6e6" stroke-width="0.7" /><path d="M5.4,4.6 L5.4,6.2" stroke="#222" fill="none" stroke-width="0.6" /></g><path d="M0,3 L2.6,3 M0,5 L2.6,5" stroke="#1f5fe0" fill="none" stroke-width="1.0" /><path d="M1.4,2 L0,3 L1.4,4 M1.4,4 L0,5 L1.4,6" stroke="#1f5fe0" fill="none" stroke-width="0.6" /></g>
<g transform="translate(496.6,27.95)"><path d="M0.6,7.2 L4,0.8 L7.4,7.2 Z" stroke="#1a1a1a" fill="#f4f4f4" stroke-width="0.8" /><path d="M4,3 L4,5.4 M4,6 L4,6.6" stroke="#1a1a1a" fill="none" stroke-width="0.8" /></g>
<g transform="translate(508.8,27.95)"><rect x="0.3" y="0.4" width="6.6" height="6.2" fill="#a9c8ea" stroke="#7d9cc0" stroke-width="0.4"/><rect x="0.3" y="3.6" width="6.6" height="3" fill="#d9d48c"/><rect x="0.3" y="0.4" width="6.6" height="1.2" fill="#5f8fd0"/><path d="M3,7.6 L5.4,3 L7.8,7.6 Z" stroke="#222" fill="#e6e6e6" stroke-width="0.7" /><path d="M5.4,4.6 L5.4,6.2" stroke="#222" fill="none" stroke-width="0.6" /><g transform="translate(0,0) scale(0.9)"><path d="M1.2,6.8 L1.9,5.2 L5.7,1.4 L6.6,2.3 L2.8,6.1 Z" stroke="#a8861c" fill="#e8c22e" stroke-width="0.3" /><path d="M0.9,7.1 L1.5,5.7 L2.3,6.5 Z" stroke="none" fill="#2a2a2a" stroke-width="0.8" /><path d="M5.7,1.4 L6.4,0.7 L7.3,1.6 L6.6,2.3 Z" stroke="none" fill="#e8484a" stroke-width="0.8" /></g></g>
<line x1="520.0" y1="27.2" x2="520.0" y2="36.8" stroke="#9a9a9a" stroke-width="0.8" />
<line x1="520.7" y1="27.2" x2="520.7" y2="36.8" stroke="#fbfbfb" stroke-width="0.6" />
<g transform="translate(523.8,27.95)"><rect x="0.4" y="2.2" width="3.4" height="4.8" fill="#3f7fd0" stroke="#2a5ca8" stroke-width="0.4"/><rect x="2.4" y="0.6" width="3" height="2" fill="#9a9a9a" stroke="#666" stroke-width="0.4"/><rect x="3.4" y="2.4" width="4.2" height="4.8" fill="#f1f1f1" stroke="#999" stroke-width="0.4"/><path d="M4.2,5 L5.4,6.4 L7.4,3.6" stroke="#2aa040" fill="none" stroke-width="1.2" /><text x="1" y="6" font-size="3.4" fill="#dce8f8">D</text></g>
<rect x="230" y="27" width="0.7" height="0.7" fill="#a4a4a4" />
<rect x="230" y="29.0" width="0.7" height="0.7" fill="#a4a4a4" />
<rect x="230" y="31.0" width="0.7" height="0.7" fill="#a4a4a4" />
<rect x="230" y="33.0" width="0.7" height="0.7" fill="#a4a4a4" />
<rect x="230" y="35.0" width="0.7" height="0.7" fill="#a4a4a4" />
<rect x="2" y="41" width="0.7" height="0.7" fill="#a4a4a4" />
<rect x="2" y="43.0" width="0.7" height="0.7" fill="#a4a4a4" />
<rect x="2" y="45.0" width="0.7" height="0.7" fill="#a4a4a4" />
<rect x="2" y="47.0" width="0.7" height="0.7" fill="#a4a4a4" />
<rect x="2" y="49.0" width="0.7" height="0.7" fill="#a4a4a4" />
<rect x="4" y="40.8" width="53.8" height="8.800000000000004" fill="#ffffff" stroke="#a6a8b0" stroke-width="0.7" />
<rect x="50.4" y="41.199999999999996" width="7.0" height="8.000000000000004" fill="#e6e6e6" stroke="#adadad" stroke-width="0.6" />
<path d="M52.39999999999999,44.5 L53.89999999999999,46.0 L55.39999999999999,44.5" stroke="#444" fill="none" stroke-width="0.7" />
<circle cx="9.6" cy="45.2" r="2.4" fill="#fff" stroke="#555" stroke-width="0.7"/>
<text x="14.60" y="47.28" font-size="5.5" fill="#080808" textLength="17.20" lengthAdjust="spacingAndGlyphs" stroke="#080808" stroke-width="0.14" >ByLayer</text>
<rect x="60.4" y="40.8" width="53.199999999999996" height="8.800000000000004" fill="#ffffff" stroke="#a6a8b0" stroke-width="0.7" />
<rect x="106.19999999999999" y="41.199999999999996" width="7.0" height="8.000000000000004" fill="#e6e6e6" stroke="#adadad" stroke-width="0.6" />
<path d="M108.19999999999999,44.5 L109.69999999999999,46.0 L111.19999999999999,44.5" stroke="#444" fill="none" stroke-width="0.7" />
<text x="62.00" y="47.28" font-size="5.5" fill="#080808" textLength="17.00" lengthAdjust="spacingAndGlyphs" stroke="#080808" stroke-width="0.14" >ByLayer</text>
<text x="86.00" y="47.28" font-size="5.5" fill="#080808" textLength="18.40" lengthAdjust="spacingAndGlyphs" stroke="#080808" stroke-width="0.14" >Solid line</text>
<rect x="116.6" y="40.8" width="53.0" height="8.800000000000004" fill="#ffffff" stroke="#a6a8b0" stroke-width="0.7" />
<rect x="162.2" y="41.199999999999996" width="7.0" height="8.000000000000004" fill="#e6e6e6" stroke="#adadad" stroke-width="0.6" />
<path d="M164.20000000000002,44.5 L165.70000000000002,46.0 L167.20000000000002,44.5" stroke="#444" fill="none" stroke-width="0.7" />
<line x1="119" y1="45.4" x2="132.4" y2="45.4" stroke="#333" stroke-width="0.6" />
<text x="134.00" y="47.28" font-size="5.5" fill="#080808" textLength="17.00" lengthAdjust="spacingAndGlyphs" stroke="#080808" stroke-width="0.14" >ByLayer</text>
<line x1="171.2" y1="40" x2="171.2" y2="51" stroke="#c9c9c9" stroke-width="0.6" />
<rect x="173.2" y="41" width="0.7" height="0.7" fill="#a4a4a4" />
<rect x="173.2" y="43.0" width="0.7" height="0.7" fill="#a4a4a4" />
<rect x="173.2" y="45.0" width="0.7" height="0.7" fill="#a4a4a4" />
<rect x="173.2" y="47.0" width="0.7" height="0.7" fill="#a4a4a4" />
<rect x="173.2" y="49.0" width="0.7" height="0.7" fill="#a4a4a4" />
<g transform="translate(176.8,41.2)"><path d="M0.4,5.6 L2,4 L7.6,4 L6,5.6 Z" stroke="#6a6a1a" fill="#c8c860" stroke-width="0.4" /><rect x="0.4" y="5.6" width="5.6" height="1.8" fill="#a8a83a" stroke="#6a6a1a" stroke-width="0.4"/><path d="M6,5.6 L7.6,4 L7.6,5.8 L6,7.4 Z" stroke="#6a6a1a" fill="#8c8c2a" stroke-width="0.4" /><path d="M1.2,2.6 L3.2,0.8 L7.4,1.4 L5.4,3.4 Z" stroke="#a0683a" fill="#e8b880" stroke-width="0.5" /><path d="M1.4,3.6 L3,2.6 L6.6,3 L5.2,4 Z" stroke="none" fill="#d4d47a" stroke-width="0.8" /></g>
<rect x="186.8" y="40.8" width="136.8" height="8.800000000000004" fill="#ffffff" stroke="#a6a8b0" stroke-width="0.7" />
<rect x="316.20000000000005" y="41.199999999999996" width="7.0" height="8.000000000000004" fill="#e6e6e6" stroke="#adadad" stroke-width="0.6" />
<path d="M318.20000000000005,44.5 L319.70000000000005,46.0 L321.20000000000005,44.5" stroke="#444" fill="none" stroke-width="0.7" />
<circle cx="192.5" cy="45.1" r="1.9" fill="#18c018" stroke="#0a8a0a" stroke-width="0.4"/>
<circle cx="192.1" cy="44.5" r="0.6" fill="#8af08a"/>
<rect x="198.2" y="43.8" width="6.6" height="2.6" rx="1.3" fill="#eaf4fd" stroke="#4a9ae0" stroke-width="0.7"/>
<path d="M199.4,46.2 L199,47.4 L200.8,46.4" stroke="#4a9ae0" fill="#eaf4fd" stroke-width="0.5" />
<rect x="209.2" y="44.6" width="4.4" height="3.2" fill="#e2c23a" stroke="#8c7414" stroke-width="0.4" />
<path d="M208.6,44.6 L208.6,43.2 Q208.8,41.8 210.4,42 Q211.6,42.2 211.6,43.4" stroke="#777" fill="none" stroke-width="0.7" />
<circle cx="220" cy="45.2" r="2.7" fill="#fff" stroke="#333" stroke-width="0.7"/>
<text x="227.00" y="47.14" font-size="5.4" fill="#222" textLength="2.60" lengthAdjust="spacingAndGlyphs" stroke="#222" stroke-width="0.14" >0</text>
<g transform="translate(326,41.3)"><path d="M0.4,2.6 L2.6,1 L6.4,1 L6.4,2.2 L7.6,2.2 L7.6,7.2 L3.4,7.2 L3.4,4.8 L0.4,4.8 Z" stroke="#8c8c2a" fill="#d8d460" stroke-width="0.4" /><rect x="3.8" y="3" width="3.6" height="4" fill="#d9d9d9" stroke="#777" stroke-width="0.4"/><path d="M4.4,4.2 L6.8,4.2 M4.4,5.4 L6.8,5.4 M5.6,3 L5.6,7" stroke="#777" fill="none" stroke-width="0.4" /></g>
<rect x="2" y="54.6" width="0.7" height="0.7" fill="#a4a4a4" />
<rect x="2" y="56.6" width="0.7" height="0.7" fill="#a4a4a4" />
<rect x="2" y="58.6" width="0.7" height="0.7" fill="#a4a4a4" />
<rect x="2" y="60.6" width="0.7" height="0.7" fill="#a4a4a4" />
<rect x="2" y="62.6" width="0.7" height="0.7" fill="#a4a4a4" />
<g transform="translate(6.6,55.2)"><path d="M0.6,4.6 L4.8,0.6 L7.4,3.2 L3.2,7.4 Z" stroke="#3f7fe8" fill="#e4ecfa" stroke-width="0.9" /><path d="M4.6,1.6 L2.6,4.4 L4,4.4 L3,7.2 L5.8,3.6 L4.4,3.6 Z" stroke="none" fill="#f0c020" stroke-width="0.8" /></g>
<g transform="translate(19.2,55.2)"><path d="M0.6,4.8 L1.8,6.2 L2.6,5" stroke="#3f7fe8" fill="none" stroke-width="0.9" /><path d="M1.6,6.6 L6.6,1.2" stroke="#3f7fe8" fill="none" stroke-width="1.0" /><path d="M3,7.4 L7.6,2.6" stroke="#777" fill="none" stroke-width="1.0" /><path d="M6,0.6 L7.8,2.4" stroke="#3f7fe8" fill="none" stroke-width="0.8" /></g>
<g transform="translate(31.1,55.2)"><path d="M0.6,0.4 L0.6,7 M7.4,0.4 L7.4,7" stroke="#3f7fe8" fill="none" stroke-width="0.7" /><path d="M0.6,2 L7.4,2" stroke="#3f7fe8" fill="none" stroke-width="0.8" /><path d="M0.8,7.2 L7.2,7.2" stroke="#333" fill="none" stroke-width="0.9" /></g>
<g transform="translate(43.2,55.2)"><path d="M0.6,0.4 L0.6,6 M7.4,0.4 L7.4,4.6" stroke="#3f7fe8" fill="none" stroke-width="0.7" /><path d="M0.6,1.6 L7.4,1.6" stroke="#3f7fe8" fill="none" stroke-width="0.8" /><rect x="1.8" y="2.8" width="2.6" height="1.4" fill="#dfe8fa" stroke="#3f7fe8" stroke-width="0.5"/><path d="M1,6.8 L5.4,6.8 L5.4,5 L7.6,5" stroke="#333" fill="none" stroke-width="0.9" /></g>
<g transform="translate(55.6,55.2)"><path d="M0.6,0.4 L0.6,6.6 M4.2,1.2 L4.2,6.4 M7.6,0.4 L7.6,5" stroke="#3f7fe8" fill="none" stroke-width="0.7" /><path d="M0.6,1.4 L7.6,1.4" stroke="#3f7fe8" fill="none" stroke-width="0.9" /><path d="M1,7 L4.6,7 L4.6,5.8 L7.4,5.8" stroke="#333" fill="none" stroke-width="0.9" /></g>
<g transform="translate(67.8,55.2)"><path d="M0.6,4.6 L3.6,1.6 L7,4.8 L5.6,6.2 L4,4.6 L2.2,6.2 Z" stroke="#555" fill="#f4f4f4" stroke-width="0.7" /><path d="M2.6,1.4 L4.6,0.6 M5.8,6.8 L7.2,5.8" stroke="#3f7fe8" fill="none" stroke-width="0.8" /></g>
<line x1="79.4" y1="54.8" x2="79.4" y2="64.2" stroke="#9a9a9a" stroke-width="0.8" />
<line x1="80.10000000000001" y1="54.8" x2="80.10000000000001" y2="64.2" stroke="#fbfbfb" stroke-width="0.6" />
<g transform="translate(82.6,55.2)"><circle cx="4" cy="4" r="3" fill="#fafafa" stroke="#444" stroke-width="0.6"/><circle cx="4" cy="4" r="1.1" fill="#3f7fe8"/><path d="M4,0 L4,1.2 M4,6.8 L4,8" stroke="#3f7fe8" fill="none" stroke-width="0.7" /></g>
<g transform="translate(95.2,55.2)"><circle cx="4" cy="4" r="3.3" fill="#fafafa" stroke="#444" stroke-width="0.65"/><path d="M1.8,6.2 L6.2,1.8" stroke="#3f7fe8" fill="none" stroke-width="1.0" /></g>
<g transform="translate(107.8,55.2)"><circle cx="4" cy="4" r="3.3" fill="#fafafa" stroke="#444" stroke-width="0.65"/><path d="M4,4.4 L5.8,1.8" stroke="#3f7fe8" fill="none" stroke-width="1.0" /></g>
<line x1="118.8" y1="54.8" x2="118.8" y2="64.2" stroke="#9a9a9a" stroke-width="0.8" />
<line x1="119.5" y1="54.8" x2="119.5" y2="64.2" stroke="#fbfbfb" stroke-width="0.6" />
<g transform="translate(122.6,55.2)"><path d="M0.8,0.6 L0.8,7.2 L7.4,7.2" stroke="#333" fill="none" stroke-width="0.75" /><path d="M1,1 Q6.2,1.8 7,6.8" stroke="#3f7fe8" fill="none" stroke-width="0.9" /><path d="M6.2,5.6 L7.1,7 L7.8,5.4" stroke="#3f7fe8" fill="none" stroke-width="0.6" /></g>
<g transform="translate(134.8,55.2)"><path d="M1,1.6 Q5.6,2.2 6.4,7.4" stroke="#555" fill="none" stroke-width="1.0" /><path d="M1.2,0.2 Q7.2,1 7.8,6.8" stroke="#3f7fe8" fill="none" stroke-width="0.9" /><path d="M0.4,0.4 L1.6,2.4 M6.4,7.6 L7.8,6.2" stroke="#3f7fe8" fill="none" stroke-width="0.7" /></g>
<g transform="translate(147.4,55.2)"><path d="M0.6,7.4 L1.6,5.2 L3.6,5 L4.6,2.8 L6.4,2.6 L7.4,0.6" stroke="#3f7fe8" fill="none" stroke-width="0.85" /></g>
<line x1="158.5" y1="54.8" x2="158.5" y2="64.2" stroke="#9a9a9a" stroke-width="0.8" />
<line x1="159.2" y1="54.8" x2="159.2" y2="64.2" stroke="#fbfbfb" stroke-width="0.6" />
<g transform="translate(162.8,55.2)"><text x="0.4" y="5.2" font-size="4.4" fill="#222">A</text><path d="M3.6,4 Q5.4,2.8 7.2,5" stroke="#3f7fe8" fill="none" stroke-width="0.8" /></g>
<g transform="translate(174.2,55.2)"><rect x="0" y="1.8" width="8.4" height="4.2" fill="#efefef" stroke="#b4b4b4" stroke-width="0.4"/><path d="M2.8,1.8 L2.8,6 M5.6,1.8 L5.6,6" stroke="#b4b4b4" fill="none" stroke-width="0.4" /><text x="0.5" y="5.4" font-size="4" fill="#9a9a9a" textLength="7.4" lengthAdjust="spacingAndGlyphs">0 0 K</text></g>
<line x1="185.5" y1="54.8" x2="185.5" y2="64.2" stroke="#9a9a9a" stroke-width="0.8" />
<line x1="186.2" y1="54.8" x2="186.2" y2="64.2" stroke="#fbfbfb" stroke-width="0.6" />
<g transform="translate(189.4,55.2)"><path d="M0.6,6.8 L0.6,4.4 L2.8,4.4 L2.8,1 L5.2,1 L5.2,4.4 L7.4,4.4 L7.4,6.8 Z" stroke="#1a1a1a" fill="#f4f4f4" stroke-width="0.7" /><path d="M0.2,2.2 L2.4,2.2 M5.6,2.2 L7.8,2.2" stroke="#3f7fe8" fill="none" stroke-width="1.1" /></g>
<line x1="200.7" y1="54.8" x2="200.7" y2="64.2" stroke="#9a9a9a" stroke-width="0.8" />
<line x1="201.39999999999998" y1="54.8" x2="201.39999999999998" y2="64.2" stroke="#fbfbfb" stroke-width="0.6" />
<g transform="translate(204.4,55.2)"><path d="M1.6,3.6 Q2.4,0.8 5,1 Q7.6,1.2 7,3.2 Q5,5.2 2.6,4.8 Z" stroke="#b07a3a" fill="#e8b87a" stroke-width="0.4" /><path d="M0.6,2.4 L0.6,7.4 M7.4,3.4 L7.4,7.4" stroke="#3f7fe8" fill="none" stroke-width="0.7" /><path d="M0.6,6.6 L7.4,6.6" stroke="#7fa6ea" fill="none" stroke-width="0.7" /></g>
<g transform="translate(217,55.2)"><path d="M1.6,3.6 Q2.4,0.8 5,1 Q7.6,1.2 7,3.2 Q5,5.2 2.6,4.8 Z" stroke="#b07a3a" fill="#e8b87a" stroke-width="0.4" /><path d="M0.6,2.4 L0.6,7.4 M7.4,3.4 L7.4,7.4" stroke="#3f7fe8" fill="none" stroke-width="0.7" /><path d="M0.6,6.8 L7.4,6.8" stroke="#7fa6ea" fill="none" stroke-width="0.6" /><text x="2.4" y="7.4" font-size="4" fill="#222">A</text></g>
<g transform="translate(229.6,55.2)"><path d="M0.8,0.8 L0.8,6.8 M7.2,0.8 L7.2,6.8" stroke="#7fa6ea" fill="none" stroke-width="1.0" /><rect x="0.8" y="2.4" width="6.4" height="2.6" fill="#cfdcf6"/><path d="M1.2,7 L6.8,7" stroke="#333" fill="none" stroke-width="1.1" /></g>
<line x1="240.5" y1="54.8" x2="240.5" y2="64.2" stroke="#9a9a9a" stroke-width="0.8" />
<line x1="241.2" y1="54.8" x2="241.2" y2="64.2" stroke="#fbfbfb" stroke-width="0.6" />
<g transform="translate(244.2,55.2)"><path d="M0.6,1 L0.6,7.4 M7.4,4 L7.4,7.4" stroke="#3f7fe8" fill="none" stroke-width="0.7" /><path d="M0.6,7 L7.4,7" stroke="#7fa6ea" fill="none" stroke-width="0.8" /><path d="M7.2,0.6 L4,4.4" stroke="#c88a2a" fill="none" stroke-width="1.3" /><path d="M4.2,4.2 L2.2,6.4" stroke="#222" fill="none" stroke-width="1.3" /></g>
<rect x="1.6" y="68.2" width="0.7" height="0.7" fill="#a4a4a4" />
<rect x="3.6" y="68.2" width="0.7" height="0.7" fill="#a4a4a4" />
<rect x="5.6" y="68.2" width="0.7" height="0.7" fill="#a4a4a4" />
<rect x="7.6" y="68.2" width="0.7" height="0.7" fill="#a4a4a4" />
<rect x="9.6" y="68.2" width="0.7" height="0.7" fill="#a4a4a4" />
<rect x="11.6" y="68.2" width="0.7" height="0.7" fill="#a4a4a4" />
<rect x="716.2" y="68.2" width="0.7" height="0.7" fill="#a4a4a4" />
<rect x="718.2" y="68.2" width="0.7" height="0.7" fill="#a4a4a4" />
<rect x="720.2" y="68.2" width="0.7" height="0.7" fill="#a4a4a4" />
<rect x="722.2" y="68.2" width="0.7" height="0.7" fill="#a4a4a4" />
<rect x="724.2" y="68.2" width="0.7" height="0.7" fill="#a4a4a4" />
<rect x="726.2" y="68.2" width="0.7" height="0.7" fill="#a4a4a4" />
<g transform="translate(2.6,72.5)"><path d="M1,0.9 L7,7.1" stroke="#2a2a2a" fill="none" stroke-width="0.8" /><circle cx="1.1" cy="1" r="0.95" fill="#c09a1a"/><circle cx="6.9" cy="7" r="0.95" fill="#c09a1a"/></g>
<g transform="translate(2.6,84.2)"><path d="M1,0.9 L7,7.1" stroke="#2a2a2a" fill="none" stroke-width="0.8" /><circle cx="4" cy="4" r="0.95" fill="#c09a1a"/><path d="M7.2,7.3 L5.4,6.6 L6.6,5.4 Z" stroke="none" fill="#2a2a2a" stroke-width="0.8" /><circle cx="1.2" cy="1.1" r="0.6" fill="#2a2a2a"/></g>
<g transform="translate(2.6,95.9)"><ellipse cx="4" cy="4" rx="3.4" ry="3.8" fill="none" stroke="#2a2a2a" stroke-width="0.75" /></g>
<g transform="translate(2.6,108)"><rect x="1" y="2.4" width="6" height="3.2" fill="#f4f4f4" stroke="#2a2a2a" stroke-width="0.8"/><circle cx="1.2" cy="2.4" r="0.95" fill="#c09a1a"/><circle cx="6.9" cy="5.7" r="0.95" fill="#c09a1a"/></g>
<g transform="translate(2.6,119.4)"><path d="M1.6,4.4 Q1.4,1 4,0.9 Q6.6,1 6.4,4.4" stroke="#2a2a2a" fill="none" stroke-width="0.8" /><path d="M1.8,4.4 L4.2,7.4" stroke="#2a2a2a" fill="none" stroke-width="0.7" /><circle cx="1.6" cy="4" r="0.95" fill="#c09a1a"/><circle cx="6.4" cy="4" r="0.95" fill="#c09a1a"/><circle cx="4.3" cy="7.2" r="0.95" fill="#c09a1a"/></g>
<g transform="translate(2.6,131.3)"><path d="M0.8,1.4 Q5.6,1.8 6.6,7.2" stroke="#2a2a2a" fill="none" stroke-width="0.8" /><circle cx="1" cy="1.4" r="0.95" fill="#c09a1a"/><circle cx="4.4" cy="3.4" r="0.95" fill="#c09a1a"/><circle cx="6.6" cy="7.2" r="0.95" fill="#c09a1a"/></g>
<g transform="translate(2.6,143.3)"><circle cx="4" cy="4" r="3.6" fill="none" stroke="#2a2a2a" stroke-width="0.75"/><circle cx="3.6" cy="3.6" r="0.7" fill="#c09a1a"/><circle cx="5.8" cy="6.2" r="0.8" fill="#c09a1a"/><path d="M3.6,3.6 L5.8,6.2" stroke="#2a2a2a" fill="none" stroke-width="0.6" /></g>
<g transform="translate(2.6,155.1)"><ellipse cx="4" cy="4" rx="2" ry="4.2" fill="none" stroke="#2a2a2a" stroke-width="0.8" transform="rotate(40 4 4)"/><circle cx="5.4" cy="1.4" r="0.7" fill="#c09a1a"/><circle cx="1.2" cy="7" r="0.95" fill="#c09a1a"/><circle cx="6.8" cy="1.2" r="0.95" fill="#c09a1a"/><path d="M3.2,4.6 L4.6,3.4" stroke="#2a2a2a" fill="none" stroke-width="0.5" /></g>
<g transform="translate(2.6,167)"><path d="M1.2,6.2 Q1.4,1.2 5.4,1.4 Q7.4,1.8 6.8,4.6" stroke="#2a2a2a" fill="none" stroke-width="0.8" /><path d="M3,5 Q3.6,2.8 5.8,3.2" stroke="#2a2a2a" fill="none" stroke-width="0.6" /><circle cx="1.2" cy="6.4" r="0.95" fill="#c09a1a"/><circle cx="4.8" cy="6.4" r="0.95" fill="#c09a1a"/></g>
<g transform="translate(2.6,179)"><circle cx="1.2" cy="1.4" r="0.7" fill="#c09a1a"/><circle cx="5.2" cy="1.2" r="0.7" fill="#c09a1a"/><circle cx="3" cy="3.4" r="0.7" fill="#c09a1a"/><circle cx="1.2" cy="6" r="0.7" fill="#c09a1a"/><circle cx="3.8" cy="5.6" r="0.7" fill="#c09a1a"/><circle cx="6.2" cy="6.6" r="0.8" fill="#c09a1a"/><path d="M0.6,1.4 L1.8,1.4 M4.6,1.2 L5.8,1.2 M2.4,3.4 L3.6,3.4" stroke="#c09a1a" fill="none" stroke-width="0.4" /></g>
<g transform="translate(2.6,190.7)"><path d="M1,6.6 Q1.4,2.8 3.4,3.4 Q5.6,4.8 6.8,0.8" stroke="#2a2a2a" fill="none" stroke-width="0.85" /><circle cx="1.1" cy="6.7" r="0.9" fill="#c09a1a"/><circle cx="6.8" cy="0.9" r="0.8" fill="#c09a1a"/></g>
<g transform="translate(2.6,202.6)"><path d="M1.4,0.8 L1.4,7.2 L4,7.2 M1.4,0.8 L3.6,0.8 L4.4,1.6 L6.6,1.6 L6.6,6.4 L4.4,6.4 L3.8,7.2" stroke="#2a2a2a" fill="none" stroke-width="0.8" /><path d="M0,4 L8,4" stroke="#4a8af0" fill="none" stroke-width="0.8" /></g>
<g transform="translate(2.6,214.5)"><rect x="0.4" y="0.6" width="7.2" height="6.8" fill="#a8a8a8"/><path d="M0.4,4 L4,0.6 M0.4,7 L7,0.6 M3.6,7.4 L7.6,3.4" stroke="#bdbdbd" fill="none" stroke-width="0.7" /></g>
<g transform="translate(2.6,226.3)"><rect x="0.5" y="0.5" width="5.6" height="6.4" fill="#e4e4e4" stroke="#aaa" stroke-width="0.4"/><path d="M2,0.8 L4.6,5.2 M4.4,0.6 L4.4,3" stroke="#2a2a2a" fill="none" stroke-width="0.7" /><circle cx="5.8" cy="5.6" r="1.9" fill="#35b34a"/><rect x="5.4" y="4.8" width="0.8" height="1.6" fill="#d9f5dc"/></g>
<g transform="translate(2.6,238.1)"><path d="M0.6,2.4 L2.4,0.6 L7.4,0.6 L7.4,5.6 L5.6,7.4 L0.6,7.4 Z" stroke="#b0901a" fill="#f0d44a" stroke-width="0.5" /><rect x="2.2" y="2.6" width="3.6" height="2.4" fill="#f4f4f4" stroke="#8a7a3a" stroke-width="0.4"/><path d="M0.8,7.9 L5.6,7.9" stroke="#9ab0e0" fill="none" stroke-width="0.5" /></g>
<g transform="translate(2.6,250)"><rect x="0.5" y="0.5" width="7" height="7" fill="#ececec" stroke="#aaa" stroke-width="0.6" rx="0.6"/><rect x="1.4" y="1.6" width="1.4" height="1.6" fill="#444"/></g>
<g transform="translate(2.6,261.5)"><rect x="0.5" y="1.8" width="7" height="4.2" fill="#f7f7f7" stroke="#aaa" stroke-width="0.6" rx="0.5"/><rect x="1.4" y="3.2" width="1.6" height="1.2" fill="#444"/></g>
<g transform="translate(2.6,273.2)"><rect x="0.5" y="0.8" width="7" height="5.4" fill="#f7f7f7" stroke="#555" stroke-width="0.7"/><g transform="translate(0.2,0.4) scale(0.95)"><path d="M1.2,6.8 L1.9,5.2 L5.7,1.4 L6.6,2.3 L2.8,6.1 Z" stroke="#a8861c" fill="#e8c22e" stroke-width="0.3" /><path d="M0.9,7.1 L1.5,5.7 L2.3,6.5 Z" stroke="none" fill="#2a2a2a" stroke-width="0.8" /><path d="M5.7,1.4 L6.4,0.7 L7.3,1.6 L6.6,2.3 Z" stroke="none" fill="#e8484a" stroke-width="0.8" /></g></g>
<g transform="translate(2.6,285.3)"><path d="M0.8,1 L7.2,1 L7.2,6.4 L6,7 L5,6.4 L4,7 L3,6.4 L2,7 L0.8,6.4 Z" stroke="#444" fill="#f4f4f4" stroke-width="0.7" stroke-dasharray="1.2 0.5"/></g>
<g transform="translate(2.6,297.3)"><path d="M2.6,0.6 L5.4,0.6 L7.6,2.8 L7.6,5.2 L5.4,7.4 L2.6,7.4 L0.4,5.2 L0.4,2.8 Z" stroke="#3a3a3a" fill="#f6f6f6" stroke-width="0.75" /></g>
<g transform="translate(2.6,309.4)"><path d="M2.9,2.6 Q3,0.5 4.4,0.5 Q5.8,0.6 5.7,2.4 Q7.8,2.2 7.7,3.8 Q7.6,5.2 6.2,5 Q6.6,7.4 5.2,7.4 Q4.2,7.4 4,6.4 Q3.4,7.6 2.2,7.2 Q1.2,6.6 2,5.2 Q0.2,5 0.4,3.6 Q0.8,2.2 2.9,2.6 Z" stroke="#3a3a3a" fill="#f6f6f6" stroke-width="0.75" /></g>
<g transform="translate(717,72.5)"><path d="M0.6,5 L5,0.8 Q6.4,0.2 7.2,1.6 Q7.6,2.6 6.8,3.4 L2.8,7 Z" stroke="#d89088" fill="#eeb4ac" stroke-width="0.4" /><path d="M0.4,7.6 L3.4,7.2 L7.4,7.6" stroke="#2a2a2a" fill="none" stroke-width="0.7" /></g>
<g transform="translate(717,83.8)"><path d="M0.6,0.6 L6.4,0.6" stroke="#666" fill="none" stroke-width="0.6" /><circle cx="3.6" cy="4.2" r="2.8" fill="#eef4fc" stroke="#666" stroke-width="0.65"/><path d="M4.6,1.4 Q7.4,1.4 7.4,4.2" stroke="#4a9af0" fill="none" stroke-width="1.0" /><path d="M2.6,2.8 L5,4.4 L2.6,5.8 Z" stroke="none" fill="#4a9af0" stroke-width="0.8" /><rect x="5.6" y="5.6" width="2" height="2" fill="#f01818"/></g>
<g transform="translate(717,96)"><rect x="0.4" y="4.6" width="3" height="3" fill="#f7f7f7" stroke="#8a8a8a" stroke-width="0.5"/><rect x="5" y="0.4" width="2.8" height="2.8" fill="#f7f7f7" stroke="#333" stroke-width="0.65"/><path d="M2.4,5.4 L5.6,2.2" stroke="#2a4cf0" fill="none" stroke-width="1.0" /></g>
<g transform="translate(717,108)"><path d="M0.6,7.2 L3.5,1 L3.5,7.2 Z" stroke="#555" fill="#f4f4f4" stroke-width="0.6" /><path d="M7.4,7.2 L4.5,1 L4.5,7.2 Z" stroke="#555" fill="#f4f4f4" stroke-width="0.6" /></g>
<g transform="translate(717,120.2)"><rect x="0.4" y="4.6" width="3" height="3" fill="#f7f7f7" stroke="#a8a8a8" stroke-width="0.45"/><rect x="5" y="0.4" width="2.8" height="2.8" fill="#f7f7f7" stroke="#333" stroke-width="0.65"/><path d="M2.4,5.4 L5.6,2.2" stroke="#2a4cf0" fill="none" stroke-width="1.0" /></g>
<g transform="translate(717,131.6)"><path d="M0.4,0.8 L7.4,0.8 L7.4,3.6 L4,7.6" stroke="#5a5a5a" fill="none" stroke-width="0.9" /><path d="M1.4,2.6 L5.8,2.6 L5.8,3.4 L3,6.8" stroke="#9a9a9a" fill="none" stroke-width="0.7" /></g>
<g transform="translate(717,143.6)"><rect x="0.4" y="0.6" width="1.6" height="1.2" fill="#333"/><rect x="0.4" y="2.6" width="1.6" height="1.2" fill="#444"/><rect x="0.4" y="4.6" width="1.6" height="1.2" fill="#444"/><rect x="0.4" y="6.4" width="1.6" height="1.2" fill="#444"/><rect x="3" y="0.6" width="4.6" height="1.4" fill="#555"/><rect x="3" y="2.8" width="2" height="1.6" fill="none" stroke="#444" stroke-width="0.6"/><rect x="5.6" y="2.8" width="2" height="1.6" fill="none" stroke="#444" stroke-width="0.6"/><rect x="3" y="5.2" width="2" height="1.8" fill="none" stroke="#444" stroke-width="0.6"/><rect x="5.6" y="5.2" width="2" height="1.8" fill="none" stroke="#444" stroke-width="0.6"/></g>
<g transform="translate(717,156.2)"><rect x="0.4" y="3.4" width="3.4" height="3.4" fill="#f7f7f7" stroke="#8a8a8a" stroke-width="0.5"/><rect x="2.6" y="0.8" width="2.4" height="1.4" fill="#2a4cf0"/><circle cx="5.4" cy="4.8" r="1.9" fill="#f7f7f7" stroke="#333" stroke-width="0.65"/></g>
<g transform="translate(717,167.6)"><rect x="0.5" y="0.5" width="7" height="6.8" fill="#f7f7f7" stroke="#555" stroke-width="0.65" rx="0.6"/><path d="M0.5,4.4 L4.2,4.4 L4.2,7.3" stroke="#777" fill="none" stroke-width="0.5" /><path d="M4,4.6 L6.6,1.6" stroke="#2a4cf0" fill="none" stroke-width="1.0" /></g>
<g transform="translate(717,178.9)"><path d="M0.6,0.6 L2.8,0.6 L2.8,4.4 L7.4,4.4 L7.4,7.2 L0.6,7.2 Z" stroke="#555" fill="#d4d4d4" stroke-width="0.65" /><circle cx="5.6" cy="5.8" r="1.1" fill="#2a4cf0"/></g>
<g transform="translate(717,190.7)"><rect x="0.4" y="5" width="2.4" height="2.8" fill="#f7f7f7" stroke="#666" stroke-width="0.5"/><rect x="3.8" y="5" width="2.4" height="2.8" fill="#f7f7f7" stroke="#666" stroke-width="0.5"/><rect x="4.6" y="0.4" width="2.6" height="2.6" fill="#f7f7f7" stroke="#2a2a2a" stroke-width="0.8"/><path d="M1.4,4.6 L4.4,1.4" stroke="#2a4cf0" fill="none" stroke-width="1.1" /><path d="M4.4,4 L7.6,4.6 L6,5.6" stroke="#2a4cf0" fill="none" stroke-width="0.9" /></g>
<g transform="translate(717,202.4)"><path d="M0.6,1.2 L2.6,1.2" stroke="#555" fill="none" stroke-width="0.9" /><path d="M2.8,1.2 Q6.4,1.6 6.8,5" stroke="#4a9af0" fill="none" stroke-width="1.2" /><path d="M6.8,5 L6.8,7.4" stroke="#2a2a2a" fill="none" stroke-width="1.1" /></g>
<g transform="translate(717,214.6)"><path d="M0.6,1.2 L2.4,1.2" stroke="#555" fill="none" stroke-width="0.9" /><path d="M2.6,1.2 Q6.4,1.2 6.8,4.6" stroke="#4a9af0" fill="none" stroke-width="1.2" /><path d="M6.8,4.8 L6.8,7" stroke="#2a2a2a" fill="none" stroke-width="1.1" /><path d="M2.8,4 L4.2,4 L3.5,5.4 Z" stroke="none" fill="#333" stroke-width="0.8" /></g>
<g transform="translate(717,226.4)"><path d="M7,1 L2.4,1 Q0.8,1 0.8,2.6 L0.8,5.4 Q0.8,7 2.4,7 L7,7 L7,3.4" stroke="#555" fill="none" stroke-width="0.75" /><rect x="6.2" y="2.4" width="1.4" height="1.4" fill="#4a9af0"/></g>
<g transform="translate(717,238.3)"><path d="M7,1 L2.4,1 Q0.8,1 0.8,2.6 L0.8,5.4 Q0.8,7 2.4,7 L7,7" stroke="#555" fill="none" stroke-width="0.75" /><rect x="6.2" y="2.6" width="1.4" height="1.2" fill="#4a9af0"/><rect x="6.2" y="4.6" width="1.4" height="1.2" fill="#4a9af0"/></g>
<g transform="translate(717,249.7)"><path d="M0.4,4 L3.2,4 M4.8,4 L7.6,4" stroke="#4a9af0" fill="none" stroke-width="0.8" /><path d="M0.4,4 L2.6,2.8 L2.6,5.2 Z M7.6,4 L5.4,2.8 L5.4,5.2 Z" stroke="none" fill="#3a8af0" stroke-width="0.8" /></g>
<g transform="translate(717,261.9)"><path d="M0.4,0.9 L7.6,0.9" stroke="#3a3a3a" fill="none" stroke-width="1.1" /><path d="M4,1.6 L4,5.4" stroke="#4a9af0" fill="none" stroke-width="0.9" /><path d="M4,5.4 L4,7.6" stroke="#2a2a2a" fill="none" stroke-width="1.0" /></g>
<g transform="translate(717,273.5)"><path d="M0.8,0.8 Q1.4,2.6 3,3" stroke="#4a9af0" fill="none" stroke-width="1.0" /><path d="M0.8,6.6 L4.4,3.6 M3.4,3.6 L6.2,7.4" stroke="#2a2a2a" fill="none" stroke-width="0.7" /><circle cx="5.4" cy="1.6" r="1.1" fill="none" stroke="#b08a2a" stroke-width="0.9"/><circle cx="6.6" cy="4" r="1.1" fill="none" stroke="#b08a2a" stroke-width="0.9"/></g>
<g transform="translate(717,285.9)"><path d="M2,0.6 Q0.4,4 2,7" stroke="#4a9af0" fill="none" stroke-width="1.0" /><path d="M3.4,1.2 L7,1.2" stroke="#4a9af0" fill="none" stroke-width="0.9" /><path d="M3.4,3 L7.2,3" stroke="#888" fill="none" stroke-width="0.7" /><path d="M2.8,5 L7.6,5" stroke="#2a2a2a" fill="none" stroke-width="1.0" /><path d="M3.4,6.8 L5,6.8" stroke="#999" fill="none" stroke-width="0.6" /></g>
<g transform="translate(717,297.5)"><path d="M4,0.4 L4,7.6 M0.4,4 L7.6,4" stroke="#9a9a9a" fill="none" stroke-width="0.6" /><rect x="3.3" y="3.3" width="1.4" height="1.4" fill="#333"/><rect x="5.4" y="3.3" width="1.4" height="1.4" fill="#2a7af0"/><rect x="3.3" y="5.4" width="1.4" height="1.4" fill="#2a7af0"/></g>
<g transform="translate(717,309)"><rect x="0.5" y="3.6" width="7" height="3.8" fill="#8c9cb4" stroke="#6a7a94" stroke-width="0.4"/><path d="M0.5,5.4 L7.5,5.4" stroke="#dfe6f0" fill="none" stroke-width="0.6" /><path d="M1.6,3.4 Q2.8,0.6 5.2,0.8 Q7.8,1 7.2,2.8 Q5.2,4.6 2.6,4.2 Z" stroke="#b07a3a" fill="#e8b87a" stroke-width="0.4" /></g>
<g transform="translate(717,321.1)"><rect x="3" y="3.2" width="4.6" height="4.2" fill="#b8dcf4" stroke="#8ab4d8" stroke-width="0.4"/><rect x="0.5" y="0.5" width="4.2" height="4.6" fill="#f6e98a" stroke="#d8c85a" stroke-width="0.4"/></g>
<g transform="translate(717,333)"><path d="M1,4 Q1,0.8 4,0.8 Q6.4,1 6.6,3" stroke="#444" fill="none" stroke-width="0.7" /><path d="M1.4,3.4 Q3,1.8 5.4,2.4 Q7.8,3 7.2,4.6 Q5.4,6.4 2.8,5.8 Z" stroke="#b07a3a" fill="#e8b87a" stroke-width="0.4" /><path d="M3.4,6 L4,7.6 L4.8,6" stroke="#9a7a1a" fill="#c8a82a" stroke-width="0.5" /><circle cx="0.9" cy="3.8" r="0.7" fill="#9a7a1a"/></g>
<g transform="translate(717,345.4)"><circle cx="3.8" cy="5.2" r="2.7" fill="#3a3a3a"/><circle cx="3" cy="4.4" r="0.9" fill="#8a8a8a"/><path d="M4.6,2.8 L5.6,1.6" stroke="#555" fill="none" stroke-width="0.9" /><rect x="5.2" y="0.4" width="1.6" height="1.4" fill="#f08a1a"/></g>
<defs><filter id="gs" x="0" y="0" width="100%" height="100%" filterUnits="userSpaceOnUse" color-interpolation-filters="sRGB"><feColorMatrix type="saturate" values="0"/></filter></defs>
<g stroke-linecap="butt" fill="none" filter="url(#gs)">
<rect x="131.3" y="103" width="220.2" height="10.3" fill="none" stroke="#5a5a5a" stroke-width="1.3" />
<text x="218.00" y="110.00" font-size="6.4" fill="#b8b8b8" textLength="30.80" lengthAdjust="spacingAndGlyphs" >500kg SWL</text>
<path d="M318.8,113.8 L321.2,113.8 L320.5,116 L319.5,116 Z" stroke="#7a7a7a" fill="none" stroke-width="0.5" />
<line x1="320" y1="116" x2="320" y2="117.6" stroke="#6a6a6a" stroke-width="0.6" />
<line x1="317.4" y1="113.3" x2="322.6" y2="113.3" stroke="#7c7c7c" stroke-width="1.1" />
<path d="M344.6,113.8 L347.0,113.8 L346.3,116 L345.3,116 Z" stroke="#7a7a7a" fill="none" stroke-width="0.5" />
<line x1="345.8" y1="116" x2="345.8" y2="117.6" stroke="#6a6a6a" stroke-width="0.6" />
<line x1="343.2" y1="113.3" x2="348.40000000000003" y2="113.3" stroke="#7c7c7c" stroke-width="1.1" />
<line x1="146.8" y1="113.5" x2="146.8" y2="312" stroke="#4a4a4a" stroke-width="1.2" />
<line x1="153.3" y1="113.5" x2="153.3" y2="312" stroke="#4a4a4a" stroke-width="1.2" />
<line x1="329.6" y1="113.5" x2="329.6" y2="312" stroke="#4a4a4a" stroke-width="1.2" />
<line x1="336.4" y1="113.5" x2="336.4" y2="312" stroke="#4a4a4a" stroke-width="1.2" />
<line x1="336.4" y1="128.8" x2="348.4" y2="114.4" stroke="#707070" stroke-width="0.85" />
<line x1="339" y1="113.8" x2="339" y2="117.6" stroke="#5a5a5a" stroke-width="0.6" />
<line x1="131.3" y1="113.9" x2="171" y2="113.9" stroke="#5c5c5c" stroke-width="1.5" />
<rect x="131.5" y="113.4" width="15.3" height="6" fill="none" stroke="#7a7a7a" stroke-width="0.8" />
<line x1="133" y1="114.5" x2="146.8" y2="129" stroke="#6c6c6c" stroke-width="0.8" />
<line x1="137" y1="113.8" x2="137" y2="117.4" stroke="#b8b8b8" stroke-width="0.9" />
<line x1="141.5" y1="113.8" x2="144.5" y2="116.8" stroke="#6a6a6a" stroke-width="0.6" />
<line x1="136" y1="119.4" x2="139" y2="119.4" stroke="#e8e8e8" stroke-width="0.9" />
<line x1="145.6" y1="119.4" x2="147" y2="119.4" stroke="#e8e8e8" stroke-width="0.9" />
<line x1="118.9" y1="108.7" x2="126.8" y2="108.7" stroke="#a8a8a8" stroke-width="1.1" />
<line x1="126.8" y1="108.7" x2="134.8" y2="108.7" stroke="#5a5a5a" stroke-width="0.7" />
<path d="M135,113.6 L137.5,112.8 L141.3,108.8 L145.5,108.8" stroke="#6e6e6e" fill="none" stroke-width="0.8" />
<line x1="146" y1="108.8" x2="153" y2="108.8" stroke="#a8a8a8" stroke-width="1.1" />
<path d="M154.5,108.8 L157.6,108.8 L162.6,113.4" stroke="#6e6e6e" fill="none" stroke-width="0.8" />
<path d="M162.5,113.4 L167,115 L172,120" stroke="#6e6e6e" fill="none" stroke-width="0.8" />
<line x1="172.5" y1="120" x2="178" y2="120" stroke="#a0a0a0" stroke-width="1.0" />
<line x1="162.6" y1="113.8" x2="162.6" y2="117" stroke="#9a9a9a" stroke-width="0.8" />
<line x1="151" y1="126.8" x2="154.8" y2="126.8" stroke="#606060" stroke-width="0.7" />
<line x1="155.2" y1="126.8" x2="163" y2="126.8" stroke="#a0a0a0" stroke-width="1.0" />
<line x1="108.5" y1="103" x2="108.5" y2="203" stroke="#8e8e8e" stroke-width="0.85" />
<line x1="108.5" y1="222.6" x2="108.5" y2="323.4" stroke="#8e8e8e" stroke-width="0.85" />
<line x1="108.2" y1="102.4" x2="118.8" y2="102.4" stroke="#909090" stroke-width="0.75" />
<line x1="108.2" y1="323.4" x2="119" y2="323.4" stroke="#909090" stroke-width="0.75" />
<ellipse cx="108.5" cy="105.2" rx="0.8" ry="1.7" fill="#f4f4f4"/>
<ellipse cx="108.5" cy="321" rx="0.8" ry="1.6" fill="#f4f4f4"/>
<text x="101.80" y="215.50" font-size="6.4" fill="#b8b8b8" textLength="13.80" lengthAdjust="spacingAndGlyphs" >3000</text>
<line x1="153.6" y1="207.7" x2="228" y2="207.7" stroke="#545454" stroke-width="1.55" />
<line x1="255.6" y1="207.7" x2="329.4" y2="207.7" stroke="#545454" stroke-width="1.55" />
<line x1="153.5" y1="207.6" x2="153.5" y2="213.4" stroke="#c8c8c8" stroke-width="0.8" />
<line x1="329.6" y1="207.6" x2="329.6" y2="213.4" stroke="#c8c8c8" stroke-width="0.8" />
<path d="M153.6,207.6 L157,206.8 L157,208.4 Z" stroke="none" fill="#fff" stroke-width="1" />
<path d="M329.4,207.6 L326,206.8 L326,208.4 Z" stroke="none" fill="#fff" stroke-width="1" />
<text x="235.40" y="209.90" font-size="6.4" fill="#b8b8b8" textLength="13.40" lengthAdjust="spacingAndGlyphs" >2400</text>
<line x1="340" y1="177.8" x2="374.6" y2="177.8" stroke="#545454" stroke-width="1.55" />
<path d="M336.8,177.6 L341.5,176.8 L341.5,178.4 Z" stroke="none" fill="#fff" stroke-width="1" />
<text x="376.60" y="179.90" font-size="6.4" fill="#b8b8b8" textLength="31.70" lengthAdjust="spacingAndGlyphs" >90x90 BOX</text>
<path d="M376,93.2 L369.6,93.2 L355,108.8" stroke="#707070" fill="none" stroke-width="0.9" />
<path d="M354.2,109.8 L355.2,106.6 L357.2,108.4 Z" stroke="none" fill="#eee" stroke-width="1" />
<text x="376.60" y="95.30" font-size="6.4" fill="#b8b8b8" textLength="39.80" lengthAdjust="spacingAndGlyphs" >152x89x16 UB</text>
<path d="M351,135.4 L351,140.6 L358.2,140.6" stroke="#c0c0c0" fill="none" stroke-width="0.8" />
<path d="M351,140.6 L354,139.8 L354,141.4 Z" stroke="none" fill="#fff" stroke-width="1" />
<text x="365.80" y="142.90" font-size="6.4" fill="#b8b8b8" textLength="10.00" lengthAdjust="spacingAndGlyphs" >200</text>
<line x1="329.6" y1="140.2" x2="336.4" y2="140.2" stroke="#bbb" stroke-width="0.8" />
<path d="M329.8,140.2 L332.2,139.4 L332.2,141 Z" stroke="none" fill="#fff" stroke-width="1" />
<path d="M336.2,140.2 L333.8,139.4 L333.8,141 Z" stroke="none" fill="#fff" stroke-width="1" />
<line x1="146.5" y1="312.4" x2="153.60000000000002" y2="312.4" stroke="#8a8a8a" stroke-width="1.0" />
<line x1="146.8" y1="306.2" x2="153.3" y2="306.2" stroke="#6a6a6a" stroke-width="0.8" />
<rect x="148.95000000000002" y="302.4" width="2.2" height="3.6" fill="none" stroke="#8c8c8c" stroke-width="0.7" />
<line x1="149.85000000000002" y1="313" x2="149.85000000000002" y2="323" stroke="#8a8a8a" stroke-width="2.4" stroke-dasharray="0.55 0.5"/>
<line x1="148.75" y1="313" x2="148.75" y2="323" stroke="#6a6a6a" stroke-width="0.5" />
<line x1="150.95000000000002" y1="313" x2="150.95000000000002" y2="323" stroke="#6a6a6a" stroke-width="0.5" />
<line x1="144.25" y1="323.4" x2="155.85000000000002" y2="323.4" stroke="#8c8c8c" stroke-width="0.9" />
<line x1="329.3" y1="312.4" x2="336.7" y2="312.4" stroke="#8a8a8a" stroke-width="1.0" />
<line x1="329.6" y1="306.2" x2="336.4" y2="306.2" stroke="#6a6a6a" stroke-width="0.8" />
<rect x="331.9" y="302.4" width="2.2" height="3.6" fill="none" stroke="#8c8c8c" stroke-width="0.7" />
<line x1="332.8" y1="313" x2="332.8" y2="323" stroke="#8a8a8a" stroke-width="2.4" stroke-dasharray="0.55 0.5"/>
<line x1="331.7" y1="313" x2="331.7" y2="323" stroke="#6a6a6a" stroke-width="0.5" />
<line x1="333.9" y1="313" x2="333.9" y2="323" stroke="#6a6a6a" stroke-width="0.5" />
<line x1="327.2" y1="323.4" x2="338.8" y2="323.4" stroke="#8c8c8c" stroke-width="0.9" />
<line x1="157" y1="310.4" x2="190" y2="310.4" stroke="#545454" stroke-width="1.55" />
<path d="M153.8,310.5 L158.5,309.7 L158.5,311.3 Z" stroke="none" fill="#fff" stroke-width="1" />
<text x="192.00" y="311.90" font-size="6.4" fill="#b8b8b8" textLength="31.70" lengthAdjust="spacingAndGlyphs" >90x90 BOX</text>
<text x="260.50" y="311.60" font-size="6.4" fill="#b8b8b8" textLength="45.00" lengthAdjust="spacingAndGlyphs" >LEVELLING FEET</text>
<text x="260.50" y="318.90" font-size="6.4" fill="#b8b8b8" textLength="48.20" lengthAdjust="spacingAndGlyphs" >250kg SWL EACH</text>
<line x1="315" y1="315.8" x2="327" y2="315.8" stroke="#545454" stroke-width="1.55" />
<path d="M331.4,315.8 L327,315 L327,316.6 Z" stroke="none" fill="#fff" stroke-width="1" />
<path d="M353.8,305.8 L349.3,305.8 L349.3,312 L343.3,312" stroke="#c0c0c0" fill="none" stroke-width="0.8" />
<path d="M343.3,323.7 L349.3,323.7 L349.3,330.8" stroke="#c0c0c0" fill="none" stroke-width="0.8" />
<path d="M349.3,312 L348.5,309.4 L350.1,309.4 Z" stroke="none" fill="#fff" stroke-width="1" />
<path d="M349.3,323.7 L348.5,326.3 L350.1,326.3 Z" stroke="none" fill="#fff" stroke-width="1" />
<text x="360.20" y="307.90" font-size="6.4" fill="#b8b8b8" textLength="9.80" lengthAdjust="spacingAndGlyphs" >150</text>
<line x1="515.6" y1="112" x2="515.6" y2="305.6" stroke="#4a4a4a" stroke-width="1.2" />
<line x1="522.1" y1="112" x2="522.1" y2="305.6" stroke="#4a4a4a" stroke-width="1.2" />
<line x1="516.2" y1="103.1" x2="522.6" y2="103.1" stroke="#8a8a8a" stroke-width="0.9" />
<line x1="519.3" y1="103.1" x2="519.3" y2="112" stroke="#999" stroke-width="0.8" />
<line x1="516" y1="112.6" x2="522.6" y2="112.6" stroke="#9a9a9a" stroke-width="1.1" />
<rect x="517" y="113.4" width="4.6" height="2.6" fill="none" stroke="#aaa" stroke-width="0.6" />
<line x1="519.3" y1="115" x2="519.3" y2="127" stroke="#8a8a8a" stroke-width="0.7" />
<line x1="501.3" y1="108.8" x2="507.6" y2="108.8" stroke="#9c9c9c" stroke-width="1.0" />
<path d="M508,108.8 L512,108.8 L517,112.5" stroke="#6a6a6a" fill="none" stroke-width="0.7" />
<line x1="509.3" y1="114.3" x2="513.8" y2="114.3" stroke="#9c9c9c" stroke-width="1.0" />
<line x1="514" y1="114.3" x2="517" y2="114.3" stroke="#5c5c5c" stroke-width="0.6" />
<line x1="505.5" y1="119.3" x2="513" y2="119.3" stroke="#9c9c9c" stroke-width="1.0" />
<line x1="513" y1="119.3" x2="519" y2="119.3" stroke="#5c5c5c" stroke-width="0.6" />
<line x1="509.3" y1="124.3" x2="513" y2="124.3" stroke="#9c9c9c" stroke-width="1.0" />
<line x1="513" y1="124.3" x2="519" y2="124.3" stroke="#5c5c5c" stroke-width="0.6" />
<path d="M542,93.2 L535,93.2 L520.6,108.6" stroke="#707070" fill="none" stroke-width="0.9" />
<path d="M519.8,109.6 L520.8,106.4 L522.8,108.2 Z" stroke="none" fill="#eee" stroke-width="1" />
<text x="542.60" y="95.30" font-size="6.4" fill="#b8b8b8" textLength="39.20" lengthAdjust="spacingAndGlyphs" >152x89x15 UB</text>
<line x1="526" y1="176.9" x2="560" y2="176.9" stroke="#545454" stroke-width="1.55" />
<path d="M522.8,176.8 L527.5,176 L527.5,177.6 Z" stroke="none" fill="#fff" stroke-width="1" />
<text x="563.00" y="179.10" font-size="6.4" fill="#b8b8b8" textLength="30.80" lengthAdjust="spacingAndGlyphs" >90x90 BOX</text>
<line x1="482.2" y1="305.7" x2="555.8" y2="305.7" stroke="#484848" stroke-width="1.35" />
<line x1="482.2" y1="312.5" x2="555.8" y2="312.5" stroke="#484848" stroke-width="1.35" />
<line x1="482.3" y1="305.2" x2="482.3" y2="313" stroke="#8a8a8a" stroke-width="0.8" />
<line x1="555.6" y1="305.2" x2="555.6" y2="313" stroke="#8a8a8a" stroke-width="0.8" />
<line x1="515.6" y1="291.3" x2="501.3" y2="305.6" stroke="#727272" stroke-width="0.8" />
<line x1="522.1" y1="291.3" x2="536.3" y2="305.6" stroke="#727272" stroke-width="0.8" />
<line x1="515.6" y1="301.8" x2="511.8" y2="305.6" stroke="#606060" stroke-width="0.6" />
<line x1="522.1" y1="301.8" x2="525.9" y2="305.6" stroke="#606060" stroke-width="0.6" />
<rect x="486.7" y="302.4" width="2.2" height="3.2" fill="none" stroke="#8c8c8c" stroke-width="0.7" />
<line x1="488.1" y1="313.2" x2="488.1" y2="323" stroke="#8a8a8a" stroke-width="2.4" stroke-dasharray="0.55 0.5"/>
<line x1="486.90000000000003" y1="313.2" x2="486.90000000000003" y2="323" stroke="#6a6a6a" stroke-width="0.5" />
<line x1="489.3" y1="313.2" x2="489.3" y2="323" stroke="#6a6a6a" stroke-width="0.5" />
<rect x="549.3" y="302.4" width="2.2" height="3.2" fill="none" stroke="#8c8c8c" stroke-width="0.7" />
<line x1="550.6999999999999" y1="313.2" x2="550.6999999999999" y2="323" stroke="#8a8a8a" stroke-width="2.4" stroke-dasharray="0.55 0.5"/>
<line x1="549.5" y1="313.2" x2="549.5" y2="323" stroke="#6a6a6a" stroke-width="0.5" />
<line x1="551.9" y1="313.2" x2="551.9" y2="323" stroke="#6a6a6a" stroke-width="0.5" />
<line x1="482.4" y1="323.4" x2="493.8" y2="323.4" stroke="#8c8c8c" stroke-width="0.9" />
<line x1="545" y1="323.4" x2="555.8" y2="323.4" stroke="#8c8c8c" stroke-width="0.9" />
<line x1="484" y1="331.8" x2="505.8" y2="331.8" stroke="#545454" stroke-width="1.55" />
<line x1="532.6" y1="331.8" x2="554.4" y2="331.8" stroke="#545454" stroke-width="1.55" />
<line x1="482.6" y1="328.6" x2="482.6" y2="331.8" stroke="#c8c8c8" stroke-width="0.8" />
<line x1="555.8" y1="328.6" x2="555.8" y2="331.8" stroke="#c8c8c8" stroke-width="0.8" />
<path d="M482.8,331.8 L485.6,331 L485.6,332.6 Z" stroke="none" fill="#fff" stroke-width="1" />
<path d="M555.6,331.8 L552.8,331 L552.8,332.6 Z" stroke="none" fill="#fff" stroke-width="1" />
<text x="513.00" y="334.10" font-size="6.4" fill="#b8b8b8" textLength="13.30" lengthAdjust="spacingAndGlyphs" >1000</text>
<path d="M544.6,284.6 L537.6,284.6 L537.6,291.3" stroke="#c0c0c0" fill="none" stroke-width="0.8" />
<text x="552.00" y="287.30" font-size="6.4" fill="#b8b8b8" textLength="10.00" lengthAdjust="spacingAndGlyphs" >200</text>
<line x1="515.6" y1="285" x2="522.1" y2="285" stroke="#bbb" stroke-width="0.8" />
<path d="M515.8,285 L518.2,284.2 L518.2,285.8 Z" stroke="none" fill="#fff" stroke-width="1" />
<path d="M521.9,285 L519.5,284.2 L519.5,285.8 Z" stroke="none" fill="#fff" stroke-width="1" />
<line x1="560" y1="309.3" x2="593.8" y2="309.3" stroke="#545454" stroke-width="1.55" />
<path d="M556.4,309.3 L561,308.5 L561,310.1 Z" stroke="none" fill="#fff" stroke-width="1" />
<text x="595.60" y="311.60" font-size="6.4" fill="#b8b8b8" textLength="30.80" lengthAdjust="spacingAndGlyphs" >90x90 BOX</text>
<rect x="34.2" y="320" width="4.2" height="4.2" fill="none" stroke="#ddd" stroke-width="0.8" />
<line x1="36.3" y1="320" x2="36.3" y2="292" stroke="#b0b0b0" stroke-width="0.85" />
<path d="M34.6,295.4 L36.3,291.8 L38,295.4" stroke="#ddd" fill="none" stroke-width="0.8" />
<line x1="38.4" y1="322.1" x2="68" y2="322.1" stroke="#b0b0b0" stroke-width="0.85" />
<path d="M64.6,320.4 L68.2,322.1 L64.6,323.8" stroke="#ddd" fill="none" stroke-width="0.8" />
<path d="M34.6,284 L36.6,286.6 L38.8,284 M36.6,286.6 L36.6,289.6" stroke="#d0d0d0" fill="none" stroke-width="0.8" />
<path d="M70.4,320 L75,325.4 M75,320 L70.4,325.4" stroke="#d0d0d0" fill="none" stroke-width="0.8" />
<rect x="602.4" y="146.5" width="3.3" height="3.1" fill="none" stroke="#d0d0d0" stroke-width="0.7" />
<path d="M605,149.6 L605,154.2 L606.1,153.2 L607.4,156 L608.3,155.6 L607.1,152.9 L608.5,152.8 Z" stroke="#111" fill="#fff" stroke-width="0.4" />
</g>
</svg>
</body></html>
